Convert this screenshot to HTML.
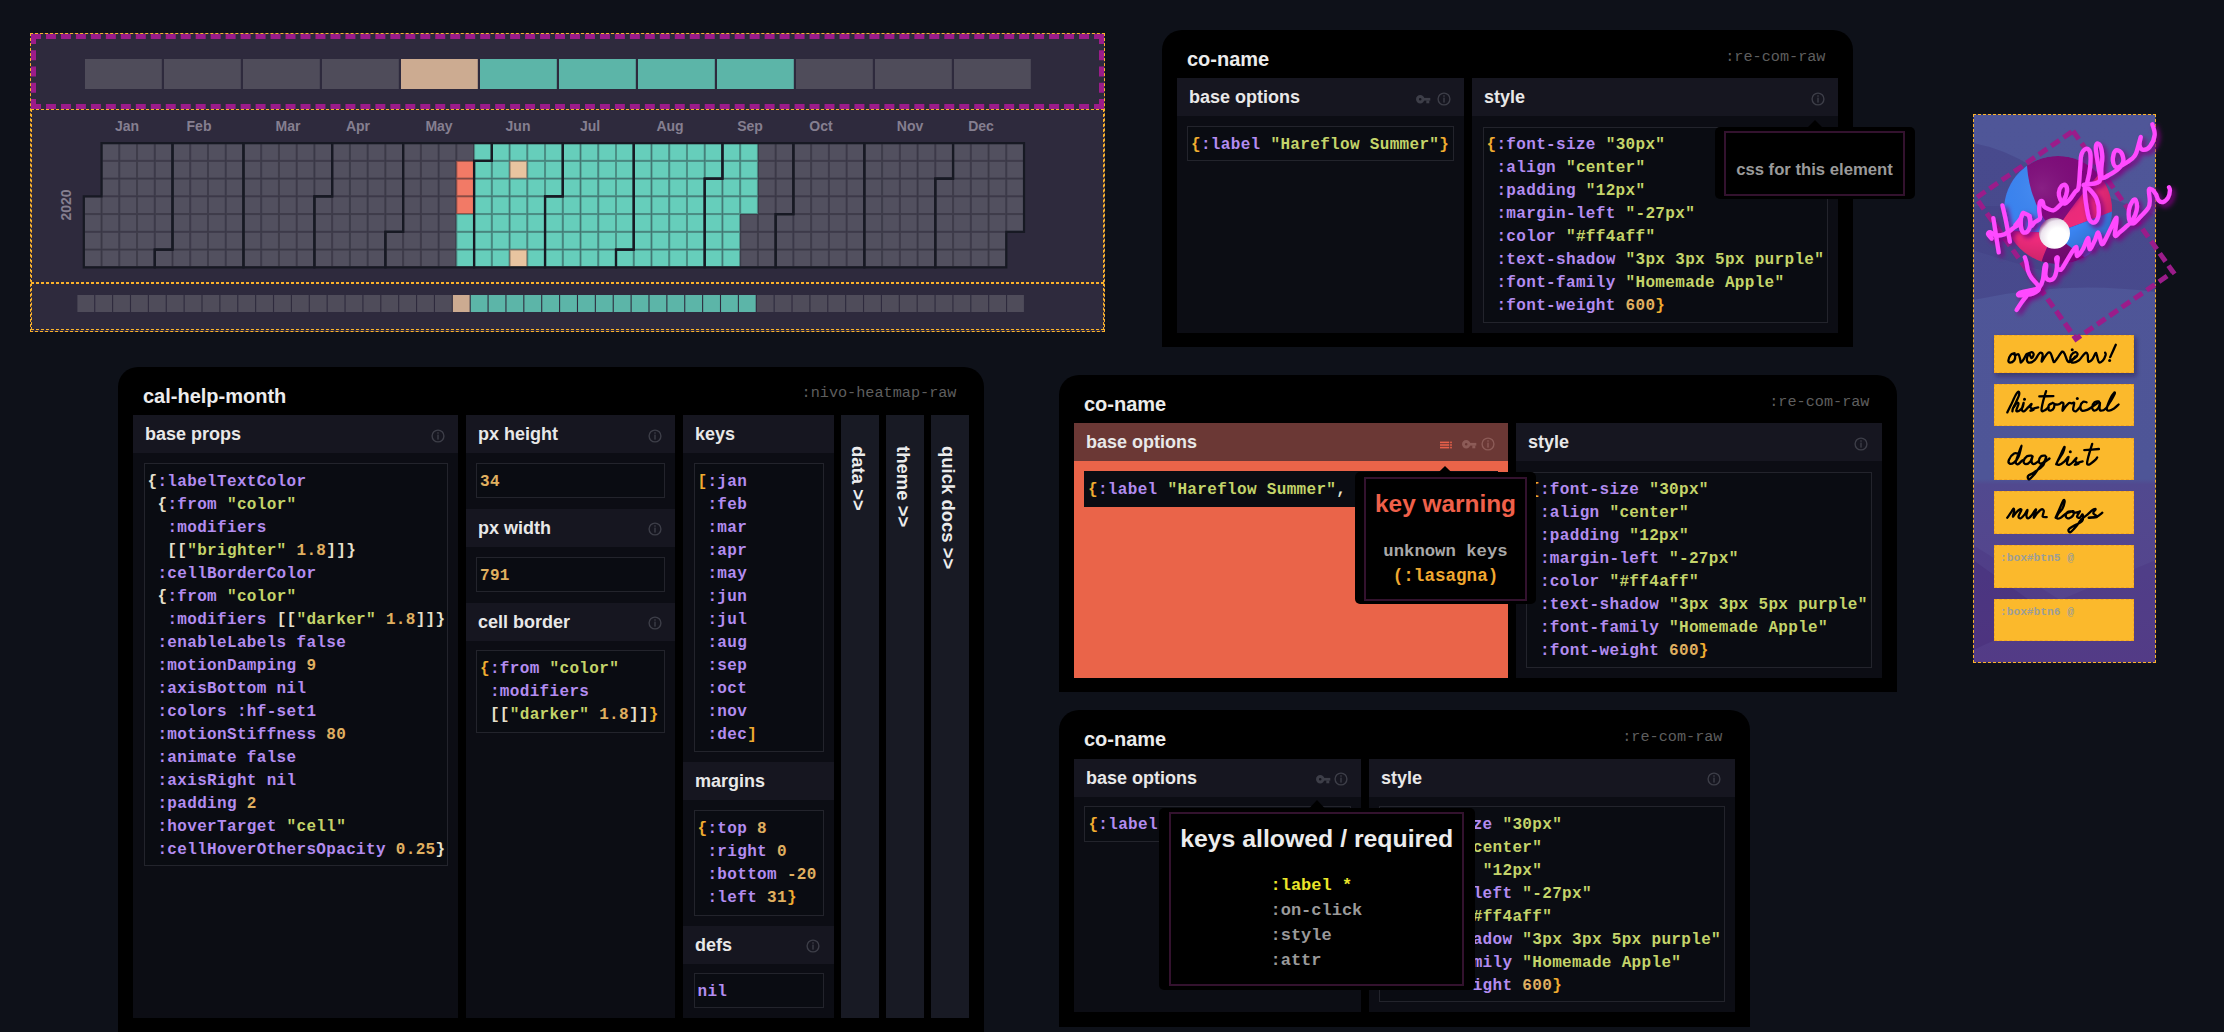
<!DOCTYPE html><html><head><meta charset="utf-8"><style>
*{box-sizing:border-box}
html,body{margin:0;padding:0}
body{width:2224px;height:1032px;background:#0e1119;position:relative;overflow:hidden;font-family:"Liberation Sans",sans-serif}
.abs{position:absolute}
.panel{position:absolute;background:#000;border-radius:20px 20px 0 0}
.title{position:absolute;color:#ececec;font-weight:bold;font-size:20px;line-height:24px;white-space:nowrap}
.raw{position:absolute;color:#5a5a5a;font-family:"Liberation Mono",monospace;font-size:14.5px;line-height:18px;white-space:nowrap;text-align:right}
.col{position:absolute;background:#0c0d14}
.hd{position:absolute;left:0;right:0;height:38px;background:#161620;color:#e8e8e8;font-weight:bold;font-size:18px;line-height:38px;padding-left:12px;white-space:nowrap}
.box{position:absolute;border:1px solid #23242c;background:#0a0c12;padding:6.5px 3px 3.5px;font-family:"Liberation Mono",monospace;font-weight:bold;font-size:16px;line-height:23px;letter-spacing:0.33px;white-space:pre;color:#e6e0cc;overflow:hidden}
.k{color:#b38cf0}.s{color:#c4d46a}.n{color:#e0b060}.o{color:#f0ac30}
.tab{position:absolute;top:415px;height:603px;width:38px;background:#181a24}
.tab span{position:absolute;left:7px;top:31px;writing-mode:vertical-rl;color:#ececec;font-weight:bold;font-size:18.5px;line-height:20px;white-space:nowrap}
.tip{position:absolute;background:#000;border-radius:5px}
.tip .in{position:absolute;border:1.5px solid #3a1436}
.tip .ar{position:absolute;width:0;height:0;border-left:7px solid transparent;border-right:7px solid transparent;border-bottom:7px solid #000}
</style></head><body>

<svg class="abs" style="left:0;top:0" width="1120" height="340" viewBox="0 0 1120 340">
<rect x="30" y="33" width="1075" height="299" fill="#2e2a3d"/>
<rect x="85.00" y="59" width="76.8" height="30" fill="#4f4c5a"/>
<rect x="164.00" y="59" width="76.8" height="30" fill="#4f4c5a"/>
<rect x="243.00" y="59" width="76.8" height="30" fill="#4f4c5a"/>
<rect x="322.00" y="59" width="76.8" height="30" fill="#4f4c5a"/>
<rect x="401.00" y="59" width="76.8" height="30" fill="#ccab91"/>
<rect x="480.00" y="59" width="76.8" height="30" fill="#5cb5a8"/>
<rect x="559.00" y="59" width="76.8" height="30" fill="#5cb5a8"/>
<rect x="638.00" y="59" width="76.8" height="30" fill="#5cb5a8"/>
<rect x="717.00" y="59" width="76.8" height="30" fill="#5cb5a8"/>
<rect x="796.00" y="59" width="76.8" height="30" fill="#4f4c5a"/>
<rect x="875.00" y="59" width="76.8" height="30" fill="#4f4c5a"/>
<rect x="954.00" y="59" width="76.8" height="30" fill="#4f4c5a"/>
<rect x="84.30" y="196.82" width="16.74" height="16.74" fill="#52505f" stroke="#3f3d4b" stroke-width="1"/>
<rect x="84.30" y="214.56" width="16.74" height="16.74" fill="#52505f" stroke="#3f3d4b" stroke-width="1"/>
<rect x="84.30" y="232.30" width="16.74" height="16.74" fill="#52505f" stroke="#3f3d4b" stroke-width="1"/>
<rect x="84.30" y="250.04" width="16.74" height="16.74" fill="#52505f" stroke="#3f3d4b" stroke-width="1"/>
<rect x="102.04" y="143.60" width="16.74" height="16.74" fill="#52505f" stroke="#3f3d4b" stroke-width="1"/>
<rect x="102.04" y="161.34" width="16.74" height="16.74" fill="#52505f" stroke="#3f3d4b" stroke-width="1"/>
<rect x="102.04" y="179.08" width="16.74" height="16.74" fill="#52505f" stroke="#3f3d4b" stroke-width="1"/>
<rect x="102.04" y="196.82" width="16.74" height="16.74" fill="#52505f" stroke="#3f3d4b" stroke-width="1"/>
<rect x="102.04" y="214.56" width="16.74" height="16.74" fill="#52505f" stroke="#3f3d4b" stroke-width="1"/>
<rect x="102.04" y="232.30" width="16.74" height="16.74" fill="#52505f" stroke="#3f3d4b" stroke-width="1"/>
<rect x="102.04" y="250.04" width="16.74" height="16.74" fill="#52505f" stroke="#3f3d4b" stroke-width="1"/>
<rect x="119.78" y="143.60" width="16.74" height="16.74" fill="#52505f" stroke="#3f3d4b" stroke-width="1"/>
<rect x="119.78" y="161.34" width="16.74" height="16.74" fill="#52505f" stroke="#3f3d4b" stroke-width="1"/>
<rect x="119.78" y="179.08" width="16.74" height="16.74" fill="#52505f" stroke="#3f3d4b" stroke-width="1"/>
<rect x="119.78" y="196.82" width="16.74" height="16.74" fill="#52505f" stroke="#3f3d4b" stroke-width="1"/>
<rect x="119.78" y="214.56" width="16.74" height="16.74" fill="#52505f" stroke="#3f3d4b" stroke-width="1"/>
<rect x="119.78" y="232.30" width="16.74" height="16.74" fill="#52505f" stroke="#3f3d4b" stroke-width="1"/>
<rect x="119.78" y="250.04" width="16.74" height="16.74" fill="#52505f" stroke="#3f3d4b" stroke-width="1"/>
<rect x="137.52" y="143.60" width="16.74" height="16.74" fill="#52505f" stroke="#3f3d4b" stroke-width="1"/>
<rect x="137.52" y="161.34" width="16.74" height="16.74" fill="#52505f" stroke="#3f3d4b" stroke-width="1"/>
<rect x="137.52" y="179.08" width="16.74" height="16.74" fill="#52505f" stroke="#3f3d4b" stroke-width="1"/>
<rect x="137.52" y="196.82" width="16.74" height="16.74" fill="#52505f" stroke="#3f3d4b" stroke-width="1"/>
<rect x="137.52" y="214.56" width="16.74" height="16.74" fill="#52505f" stroke="#3f3d4b" stroke-width="1"/>
<rect x="137.52" y="232.30" width="16.74" height="16.74" fill="#52505f" stroke="#3f3d4b" stroke-width="1"/>
<rect x="137.52" y="250.04" width="16.74" height="16.74" fill="#52505f" stroke="#3f3d4b" stroke-width="1"/>
<rect x="155.26" y="143.60" width="16.74" height="16.74" fill="#52505f" stroke="#3f3d4b" stroke-width="1"/>
<rect x="155.26" y="161.34" width="16.74" height="16.74" fill="#52505f" stroke="#3f3d4b" stroke-width="1"/>
<rect x="155.26" y="179.08" width="16.74" height="16.74" fill="#52505f" stroke="#3f3d4b" stroke-width="1"/>
<rect x="155.26" y="196.82" width="16.74" height="16.74" fill="#52505f" stroke="#3f3d4b" stroke-width="1"/>
<rect x="155.26" y="214.56" width="16.74" height="16.74" fill="#52505f" stroke="#3f3d4b" stroke-width="1"/>
<rect x="155.26" y="232.30" width="16.74" height="16.74" fill="#52505f" stroke="#3f3d4b" stroke-width="1"/>
<rect x="155.26" y="250.04" width="16.74" height="16.74" fill="#52505f" stroke="#3f3d4b" stroke-width="1"/>
<rect x="173.00" y="143.60" width="16.74" height="16.74" fill="#52505f" stroke="#3f3d4b" stroke-width="1"/>
<rect x="173.00" y="161.34" width="16.74" height="16.74" fill="#52505f" stroke="#3f3d4b" stroke-width="1"/>
<rect x="173.00" y="179.08" width="16.74" height="16.74" fill="#52505f" stroke="#3f3d4b" stroke-width="1"/>
<rect x="173.00" y="196.82" width="16.74" height="16.74" fill="#52505f" stroke="#3f3d4b" stroke-width="1"/>
<rect x="173.00" y="214.56" width="16.74" height="16.74" fill="#52505f" stroke="#3f3d4b" stroke-width="1"/>
<rect x="173.00" y="232.30" width="16.74" height="16.74" fill="#52505f" stroke="#3f3d4b" stroke-width="1"/>
<rect x="173.00" y="250.04" width="16.74" height="16.74" fill="#52505f" stroke="#3f3d4b" stroke-width="1"/>
<rect x="190.74" y="143.60" width="16.74" height="16.74" fill="#52505f" stroke="#3f3d4b" stroke-width="1"/>
<rect x="190.74" y="161.34" width="16.74" height="16.74" fill="#52505f" stroke="#3f3d4b" stroke-width="1"/>
<rect x="190.74" y="179.08" width="16.74" height="16.74" fill="#52505f" stroke="#3f3d4b" stroke-width="1"/>
<rect x="190.74" y="196.82" width="16.74" height="16.74" fill="#52505f" stroke="#3f3d4b" stroke-width="1"/>
<rect x="190.74" y="214.56" width="16.74" height="16.74" fill="#52505f" stroke="#3f3d4b" stroke-width="1"/>
<rect x="190.74" y="232.30" width="16.74" height="16.74" fill="#52505f" stroke="#3f3d4b" stroke-width="1"/>
<rect x="190.74" y="250.04" width="16.74" height="16.74" fill="#52505f" stroke="#3f3d4b" stroke-width="1"/>
<rect x="208.48" y="143.60" width="16.74" height="16.74" fill="#52505f" stroke="#3f3d4b" stroke-width="1"/>
<rect x="208.48" y="161.34" width="16.74" height="16.74" fill="#52505f" stroke="#3f3d4b" stroke-width="1"/>
<rect x="208.48" y="179.08" width="16.74" height="16.74" fill="#52505f" stroke="#3f3d4b" stroke-width="1"/>
<rect x="208.48" y="196.82" width="16.74" height="16.74" fill="#52505f" stroke="#3f3d4b" stroke-width="1"/>
<rect x="208.48" y="214.56" width="16.74" height="16.74" fill="#52505f" stroke="#3f3d4b" stroke-width="1"/>
<rect x="208.48" y="232.30" width="16.74" height="16.74" fill="#52505f" stroke="#3f3d4b" stroke-width="1"/>
<rect x="208.48" y="250.04" width="16.74" height="16.74" fill="#52505f" stroke="#3f3d4b" stroke-width="1"/>
<rect x="226.22" y="143.60" width="16.74" height="16.74" fill="#52505f" stroke="#3f3d4b" stroke-width="1"/>
<rect x="226.22" y="161.34" width="16.74" height="16.74" fill="#52505f" stroke="#3f3d4b" stroke-width="1"/>
<rect x="226.22" y="179.08" width="16.74" height="16.74" fill="#52505f" stroke="#3f3d4b" stroke-width="1"/>
<rect x="226.22" y="196.82" width="16.74" height="16.74" fill="#52505f" stroke="#3f3d4b" stroke-width="1"/>
<rect x="226.22" y="214.56" width="16.74" height="16.74" fill="#52505f" stroke="#3f3d4b" stroke-width="1"/>
<rect x="226.22" y="232.30" width="16.74" height="16.74" fill="#52505f" stroke="#3f3d4b" stroke-width="1"/>
<rect x="226.22" y="250.04" width="16.74" height="16.74" fill="#52505f" stroke="#3f3d4b" stroke-width="1"/>
<rect x="243.96" y="143.60" width="16.74" height="16.74" fill="#52505f" stroke="#3f3d4b" stroke-width="1"/>
<rect x="243.96" y="161.34" width="16.74" height="16.74" fill="#52505f" stroke="#3f3d4b" stroke-width="1"/>
<rect x="243.96" y="179.08" width="16.74" height="16.74" fill="#52505f" stroke="#3f3d4b" stroke-width="1"/>
<rect x="243.96" y="196.82" width="16.74" height="16.74" fill="#52505f" stroke="#3f3d4b" stroke-width="1"/>
<rect x="243.96" y="214.56" width="16.74" height="16.74" fill="#52505f" stroke="#3f3d4b" stroke-width="1"/>
<rect x="243.96" y="232.30" width="16.74" height="16.74" fill="#52505f" stroke="#3f3d4b" stroke-width="1"/>
<rect x="243.96" y="250.04" width="16.74" height="16.74" fill="#52505f" stroke="#3f3d4b" stroke-width="1"/>
<rect x="261.70" y="143.60" width="16.74" height="16.74" fill="#52505f" stroke="#3f3d4b" stroke-width="1"/>
<rect x="261.70" y="161.34" width="16.74" height="16.74" fill="#52505f" stroke="#3f3d4b" stroke-width="1"/>
<rect x="261.70" y="179.08" width="16.74" height="16.74" fill="#52505f" stroke="#3f3d4b" stroke-width="1"/>
<rect x="261.70" y="196.82" width="16.74" height="16.74" fill="#52505f" stroke="#3f3d4b" stroke-width="1"/>
<rect x="261.70" y="214.56" width="16.74" height="16.74" fill="#52505f" stroke="#3f3d4b" stroke-width="1"/>
<rect x="261.70" y="232.30" width="16.74" height="16.74" fill="#52505f" stroke="#3f3d4b" stroke-width="1"/>
<rect x="261.70" y="250.04" width="16.74" height="16.74" fill="#52505f" stroke="#3f3d4b" stroke-width="1"/>
<rect x="279.44" y="143.60" width="16.74" height="16.74" fill="#52505f" stroke="#3f3d4b" stroke-width="1"/>
<rect x="279.44" y="161.34" width="16.74" height="16.74" fill="#52505f" stroke="#3f3d4b" stroke-width="1"/>
<rect x="279.44" y="179.08" width="16.74" height="16.74" fill="#52505f" stroke="#3f3d4b" stroke-width="1"/>
<rect x="279.44" y="196.82" width="16.74" height="16.74" fill="#52505f" stroke="#3f3d4b" stroke-width="1"/>
<rect x="279.44" y="214.56" width="16.74" height="16.74" fill="#52505f" stroke="#3f3d4b" stroke-width="1"/>
<rect x="279.44" y="232.30" width="16.74" height="16.74" fill="#52505f" stroke="#3f3d4b" stroke-width="1"/>
<rect x="279.44" y="250.04" width="16.74" height="16.74" fill="#52505f" stroke="#3f3d4b" stroke-width="1"/>
<rect x="297.18" y="143.60" width="16.74" height="16.74" fill="#52505f" stroke="#3f3d4b" stroke-width="1"/>
<rect x="297.18" y="161.34" width="16.74" height="16.74" fill="#52505f" stroke="#3f3d4b" stroke-width="1"/>
<rect x="297.18" y="179.08" width="16.74" height="16.74" fill="#52505f" stroke="#3f3d4b" stroke-width="1"/>
<rect x="297.18" y="196.82" width="16.74" height="16.74" fill="#52505f" stroke="#3f3d4b" stroke-width="1"/>
<rect x="297.18" y="214.56" width="16.74" height="16.74" fill="#52505f" stroke="#3f3d4b" stroke-width="1"/>
<rect x="297.18" y="232.30" width="16.74" height="16.74" fill="#52505f" stroke="#3f3d4b" stroke-width="1"/>
<rect x="297.18" y="250.04" width="16.74" height="16.74" fill="#52505f" stroke="#3f3d4b" stroke-width="1"/>
<rect x="314.92" y="143.60" width="16.74" height="16.74" fill="#52505f" stroke="#3f3d4b" stroke-width="1"/>
<rect x="314.92" y="161.34" width="16.74" height="16.74" fill="#52505f" stroke="#3f3d4b" stroke-width="1"/>
<rect x="314.92" y="179.08" width="16.74" height="16.74" fill="#52505f" stroke="#3f3d4b" stroke-width="1"/>
<rect x="314.92" y="196.82" width="16.74" height="16.74" fill="#52505f" stroke="#3f3d4b" stroke-width="1"/>
<rect x="314.92" y="214.56" width="16.74" height="16.74" fill="#52505f" stroke="#3f3d4b" stroke-width="1"/>
<rect x="314.92" y="232.30" width="16.74" height="16.74" fill="#52505f" stroke="#3f3d4b" stroke-width="1"/>
<rect x="314.92" y="250.04" width="16.74" height="16.74" fill="#52505f" stroke="#3f3d4b" stroke-width="1"/>
<rect x="332.66" y="143.60" width="16.74" height="16.74" fill="#52505f" stroke="#3f3d4b" stroke-width="1"/>
<rect x="332.66" y="161.34" width="16.74" height="16.74" fill="#52505f" stroke="#3f3d4b" stroke-width="1"/>
<rect x="332.66" y="179.08" width="16.74" height="16.74" fill="#52505f" stroke="#3f3d4b" stroke-width="1"/>
<rect x="332.66" y="196.82" width="16.74" height="16.74" fill="#52505f" stroke="#3f3d4b" stroke-width="1"/>
<rect x="332.66" y="214.56" width="16.74" height="16.74" fill="#52505f" stroke="#3f3d4b" stroke-width="1"/>
<rect x="332.66" y="232.30" width="16.74" height="16.74" fill="#52505f" stroke="#3f3d4b" stroke-width="1"/>
<rect x="332.66" y="250.04" width="16.74" height="16.74" fill="#52505f" stroke="#3f3d4b" stroke-width="1"/>
<rect x="350.40" y="143.60" width="16.74" height="16.74" fill="#52505f" stroke="#3f3d4b" stroke-width="1"/>
<rect x="350.40" y="161.34" width="16.74" height="16.74" fill="#52505f" stroke="#3f3d4b" stroke-width="1"/>
<rect x="350.40" y="179.08" width="16.74" height="16.74" fill="#52505f" stroke="#3f3d4b" stroke-width="1"/>
<rect x="350.40" y="196.82" width="16.74" height="16.74" fill="#52505f" stroke="#3f3d4b" stroke-width="1"/>
<rect x="350.40" y="214.56" width="16.74" height="16.74" fill="#52505f" stroke="#3f3d4b" stroke-width="1"/>
<rect x="350.40" y="232.30" width="16.74" height="16.74" fill="#52505f" stroke="#3f3d4b" stroke-width="1"/>
<rect x="350.40" y="250.04" width="16.74" height="16.74" fill="#52505f" stroke="#3f3d4b" stroke-width="1"/>
<rect x="368.14" y="143.60" width="16.74" height="16.74" fill="#52505f" stroke="#3f3d4b" stroke-width="1"/>
<rect x="368.14" y="161.34" width="16.74" height="16.74" fill="#52505f" stroke="#3f3d4b" stroke-width="1"/>
<rect x="368.14" y="179.08" width="16.74" height="16.74" fill="#52505f" stroke="#3f3d4b" stroke-width="1"/>
<rect x="368.14" y="196.82" width="16.74" height="16.74" fill="#52505f" stroke="#3f3d4b" stroke-width="1"/>
<rect x="368.14" y="214.56" width="16.74" height="16.74" fill="#52505f" stroke="#3f3d4b" stroke-width="1"/>
<rect x="368.14" y="232.30" width="16.74" height="16.74" fill="#52505f" stroke="#3f3d4b" stroke-width="1"/>
<rect x="368.14" y="250.04" width="16.74" height="16.74" fill="#52505f" stroke="#3f3d4b" stroke-width="1"/>
<rect x="385.88" y="143.60" width="16.74" height="16.74" fill="#52505f" stroke="#3f3d4b" stroke-width="1"/>
<rect x="385.88" y="161.34" width="16.74" height="16.74" fill="#52505f" stroke="#3f3d4b" stroke-width="1"/>
<rect x="385.88" y="179.08" width="16.74" height="16.74" fill="#52505f" stroke="#3f3d4b" stroke-width="1"/>
<rect x="385.88" y="196.82" width="16.74" height="16.74" fill="#52505f" stroke="#3f3d4b" stroke-width="1"/>
<rect x="385.88" y="214.56" width="16.74" height="16.74" fill="#52505f" stroke="#3f3d4b" stroke-width="1"/>
<rect x="385.88" y="232.30" width="16.74" height="16.74" fill="#52505f" stroke="#3f3d4b" stroke-width="1"/>
<rect x="385.88" y="250.04" width="16.74" height="16.74" fill="#52505f" stroke="#3f3d4b" stroke-width="1"/>
<rect x="403.62" y="143.60" width="16.74" height="16.74" fill="#52505f" stroke="#3f3d4b" stroke-width="1"/>
<rect x="403.62" y="161.34" width="16.74" height="16.74" fill="#52505f" stroke="#3f3d4b" stroke-width="1"/>
<rect x="403.62" y="179.08" width="16.74" height="16.74" fill="#52505f" stroke="#3f3d4b" stroke-width="1"/>
<rect x="403.62" y="196.82" width="16.74" height="16.74" fill="#52505f" stroke="#3f3d4b" stroke-width="1"/>
<rect x="403.62" y="214.56" width="16.74" height="16.74" fill="#52505f" stroke="#3f3d4b" stroke-width="1"/>
<rect x="403.62" y="232.30" width="16.74" height="16.74" fill="#52505f" stroke="#3f3d4b" stroke-width="1"/>
<rect x="403.62" y="250.04" width="16.74" height="16.74" fill="#52505f" stroke="#3f3d4b" stroke-width="1"/>
<rect x="421.36" y="143.60" width="16.74" height="16.74" fill="#52505f" stroke="#3f3d4b" stroke-width="1"/>
<rect x="421.36" y="161.34" width="16.74" height="16.74" fill="#52505f" stroke="#3f3d4b" stroke-width="1"/>
<rect x="421.36" y="179.08" width="16.74" height="16.74" fill="#52505f" stroke="#3f3d4b" stroke-width="1"/>
<rect x="421.36" y="196.82" width="16.74" height="16.74" fill="#52505f" stroke="#3f3d4b" stroke-width="1"/>
<rect x="421.36" y="214.56" width="16.74" height="16.74" fill="#52505f" stroke="#3f3d4b" stroke-width="1"/>
<rect x="421.36" y="232.30" width="16.74" height="16.74" fill="#52505f" stroke="#3f3d4b" stroke-width="1"/>
<rect x="421.36" y="250.04" width="16.74" height="16.74" fill="#52505f" stroke="#3f3d4b" stroke-width="1"/>
<rect x="439.10" y="143.60" width="16.74" height="16.74" fill="#52505f" stroke="#3f3d4b" stroke-width="1"/>
<rect x="439.10" y="161.34" width="16.74" height="16.74" fill="#52505f" stroke="#3f3d4b" stroke-width="1"/>
<rect x="439.10" y="179.08" width="16.74" height="16.74" fill="#52505f" stroke="#3f3d4b" stroke-width="1"/>
<rect x="439.10" y="196.82" width="16.74" height="16.74" fill="#52505f" stroke="#3f3d4b" stroke-width="1"/>
<rect x="439.10" y="214.56" width="16.74" height="16.74" fill="#52505f" stroke="#3f3d4b" stroke-width="1"/>
<rect x="439.10" y="232.30" width="16.74" height="16.74" fill="#52505f" stroke="#3f3d4b" stroke-width="1"/>
<rect x="439.10" y="250.04" width="16.74" height="16.74" fill="#52505f" stroke="#3f3d4b" stroke-width="1"/>
<rect x="456.84" y="143.60" width="16.74" height="16.74" fill="#52505f" stroke="#3f3d4b" stroke-width="1"/>
<rect x="456.84" y="161.34" width="16.74" height="16.74" fill="#f27a66" stroke="#9a5247" stroke-width="1"/>
<rect x="456.84" y="179.08" width="16.74" height="16.74" fill="#f27a66" stroke="#9a5247" stroke-width="1"/>
<rect x="456.84" y="196.82" width="16.74" height="16.74" fill="#f27a66" stroke="#9a5247" stroke-width="1"/>
<rect x="456.84" y="214.56" width="16.74" height="16.74" fill="#66cebb" stroke="#4b8f85" stroke-width="1"/>
<rect x="456.84" y="232.30" width="16.74" height="16.74" fill="#66cebb" stroke="#4b8f85" stroke-width="1"/>
<rect x="456.84" y="250.04" width="16.74" height="16.74" fill="#66cebb" stroke="#4b8f85" stroke-width="1"/>
<rect x="474.58" y="143.60" width="16.74" height="16.74" fill="#66cebb" stroke="#4b8f85" stroke-width="1"/>
<rect x="474.58" y="161.34" width="16.74" height="16.74" fill="#66cebb" stroke="#4b8f85" stroke-width="1"/>
<rect x="474.58" y="179.08" width="16.74" height="16.74" fill="#66cebb" stroke="#4b8f85" stroke-width="1"/>
<rect x="474.58" y="196.82" width="16.74" height="16.74" fill="#66cebb" stroke="#4b8f85" stroke-width="1"/>
<rect x="474.58" y="214.56" width="16.74" height="16.74" fill="#66cebb" stroke="#4b8f85" stroke-width="1"/>
<rect x="474.58" y="232.30" width="16.74" height="16.74" fill="#66cebb" stroke="#4b8f85" stroke-width="1"/>
<rect x="474.58" y="250.04" width="16.74" height="16.74" fill="#66cebb" stroke="#4b8f85" stroke-width="1"/>
<rect x="492.32" y="143.60" width="16.74" height="16.74" fill="#66cebb" stroke="#4b8f85" stroke-width="1"/>
<rect x="492.32" y="161.34" width="16.74" height="16.74" fill="#66cebb" stroke="#4b8f85" stroke-width="1"/>
<rect x="492.32" y="179.08" width="16.74" height="16.74" fill="#66cebb" stroke="#4b8f85" stroke-width="1"/>
<rect x="492.32" y="196.82" width="16.74" height="16.74" fill="#66cebb" stroke="#4b8f85" stroke-width="1"/>
<rect x="492.32" y="214.56" width="16.74" height="16.74" fill="#66cebb" stroke="#4b8f85" stroke-width="1"/>
<rect x="492.32" y="232.30" width="16.74" height="16.74" fill="#66cebb" stroke="#4b8f85" stroke-width="1"/>
<rect x="492.32" y="250.04" width="16.74" height="16.74" fill="#66cebb" stroke="#4b8f85" stroke-width="1"/>
<rect x="510.06" y="143.60" width="16.74" height="16.74" fill="#66cebb" stroke="#4b8f85" stroke-width="1"/>
<rect x="510.06" y="161.34" width="16.74" height="16.74" fill="#e8c4a0" stroke="#9c8670" stroke-width="1"/>
<rect x="510.06" y="179.08" width="16.74" height="16.74" fill="#66cebb" stroke="#4b8f85" stroke-width="1"/>
<rect x="510.06" y="196.82" width="16.74" height="16.74" fill="#66cebb" stroke="#4b8f85" stroke-width="1"/>
<rect x="510.06" y="214.56" width="16.74" height="16.74" fill="#66cebb" stroke="#4b8f85" stroke-width="1"/>
<rect x="510.06" y="232.30" width="16.74" height="16.74" fill="#66cebb" stroke="#4b8f85" stroke-width="1"/>
<rect x="510.06" y="250.04" width="16.74" height="16.74" fill="#e8c4a0" stroke="#9c8670" stroke-width="1"/>
<rect x="527.80" y="143.60" width="16.74" height="16.74" fill="#66cebb" stroke="#4b8f85" stroke-width="1"/>
<rect x="527.80" y="161.34" width="16.74" height="16.74" fill="#66cebb" stroke="#4b8f85" stroke-width="1"/>
<rect x="527.80" y="179.08" width="16.74" height="16.74" fill="#66cebb" stroke="#4b8f85" stroke-width="1"/>
<rect x="527.80" y="196.82" width="16.74" height="16.74" fill="#66cebb" stroke="#4b8f85" stroke-width="1"/>
<rect x="527.80" y="214.56" width="16.74" height="16.74" fill="#66cebb" stroke="#4b8f85" stroke-width="1"/>
<rect x="527.80" y="232.30" width="16.74" height="16.74" fill="#66cebb" stroke="#4b8f85" stroke-width="1"/>
<rect x="527.80" y="250.04" width="16.74" height="16.74" fill="#66cebb" stroke="#4b8f85" stroke-width="1"/>
<rect x="545.54" y="143.60" width="16.74" height="16.74" fill="#66cebb" stroke="#4b8f85" stroke-width="1"/>
<rect x="545.54" y="161.34" width="16.74" height="16.74" fill="#66cebb" stroke="#4b8f85" stroke-width="1"/>
<rect x="545.54" y="179.08" width="16.74" height="16.74" fill="#66cebb" stroke="#4b8f85" stroke-width="1"/>
<rect x="545.54" y="196.82" width="16.74" height="16.74" fill="#66cebb" stroke="#4b8f85" stroke-width="1"/>
<rect x="545.54" y="214.56" width="16.74" height="16.74" fill="#66cebb" stroke="#4b8f85" stroke-width="1"/>
<rect x="545.54" y="232.30" width="16.74" height="16.74" fill="#66cebb" stroke="#4b8f85" stroke-width="1"/>
<rect x="545.54" y="250.04" width="16.74" height="16.74" fill="#66cebb" stroke="#4b8f85" stroke-width="1"/>
<rect x="563.28" y="143.60" width="16.74" height="16.74" fill="#66cebb" stroke="#4b8f85" stroke-width="1"/>
<rect x="563.28" y="161.34" width="16.74" height="16.74" fill="#66cebb" stroke="#4b8f85" stroke-width="1"/>
<rect x="563.28" y="179.08" width="16.74" height="16.74" fill="#66cebb" stroke="#4b8f85" stroke-width="1"/>
<rect x="563.28" y="196.82" width="16.74" height="16.74" fill="#66cebb" stroke="#4b8f85" stroke-width="1"/>
<rect x="563.28" y="214.56" width="16.74" height="16.74" fill="#66cebb" stroke="#4b8f85" stroke-width="1"/>
<rect x="563.28" y="232.30" width="16.74" height="16.74" fill="#66cebb" stroke="#4b8f85" stroke-width="1"/>
<rect x="563.28" y="250.04" width="16.74" height="16.74" fill="#66cebb" stroke="#4b8f85" stroke-width="1"/>
<rect x="581.02" y="143.60" width="16.74" height="16.74" fill="#66cebb" stroke="#4b8f85" stroke-width="1"/>
<rect x="581.02" y="161.34" width="16.74" height="16.74" fill="#66cebb" stroke="#4b8f85" stroke-width="1"/>
<rect x="581.02" y="179.08" width="16.74" height="16.74" fill="#66cebb" stroke="#4b8f85" stroke-width="1"/>
<rect x="581.02" y="196.82" width="16.74" height="16.74" fill="#66cebb" stroke="#4b8f85" stroke-width="1"/>
<rect x="581.02" y="214.56" width="16.74" height="16.74" fill="#66cebb" stroke="#4b8f85" stroke-width="1"/>
<rect x="581.02" y="232.30" width="16.74" height="16.74" fill="#66cebb" stroke="#4b8f85" stroke-width="1"/>
<rect x="581.02" y="250.04" width="16.74" height="16.74" fill="#66cebb" stroke="#4b8f85" stroke-width="1"/>
<rect x="598.76" y="143.60" width="16.74" height="16.74" fill="#66cebb" stroke="#4b8f85" stroke-width="1"/>
<rect x="598.76" y="161.34" width="16.74" height="16.74" fill="#66cebb" stroke="#4b8f85" stroke-width="1"/>
<rect x="598.76" y="179.08" width="16.74" height="16.74" fill="#66cebb" stroke="#4b8f85" stroke-width="1"/>
<rect x="598.76" y="196.82" width="16.74" height="16.74" fill="#66cebb" stroke="#4b8f85" stroke-width="1"/>
<rect x="598.76" y="214.56" width="16.74" height="16.74" fill="#66cebb" stroke="#4b8f85" stroke-width="1"/>
<rect x="598.76" y="232.30" width="16.74" height="16.74" fill="#66cebb" stroke="#4b8f85" stroke-width="1"/>
<rect x="598.76" y="250.04" width="16.74" height="16.74" fill="#66cebb" stroke="#4b8f85" stroke-width="1"/>
<rect x="616.50" y="143.60" width="16.74" height="16.74" fill="#66cebb" stroke="#4b8f85" stroke-width="1"/>
<rect x="616.50" y="161.34" width="16.74" height="16.74" fill="#66cebb" stroke="#4b8f85" stroke-width="1"/>
<rect x="616.50" y="179.08" width="16.74" height="16.74" fill="#66cebb" stroke="#4b8f85" stroke-width="1"/>
<rect x="616.50" y="196.82" width="16.74" height="16.74" fill="#66cebb" stroke="#4b8f85" stroke-width="1"/>
<rect x="616.50" y="214.56" width="16.74" height="16.74" fill="#66cebb" stroke="#4b8f85" stroke-width="1"/>
<rect x="616.50" y="232.30" width="16.74" height="16.74" fill="#66cebb" stroke="#4b8f85" stroke-width="1"/>
<rect x="616.50" y="250.04" width="16.74" height="16.74" fill="#66cebb" stroke="#4b8f85" stroke-width="1"/>
<rect x="634.24" y="143.60" width="16.74" height="16.74" fill="#66cebb" stroke="#4b8f85" stroke-width="1"/>
<rect x="634.24" y="161.34" width="16.74" height="16.74" fill="#66cebb" stroke="#4b8f85" stroke-width="1"/>
<rect x="634.24" y="179.08" width="16.74" height="16.74" fill="#66cebb" stroke="#4b8f85" stroke-width="1"/>
<rect x="634.24" y="196.82" width="16.74" height="16.74" fill="#66cebb" stroke="#4b8f85" stroke-width="1"/>
<rect x="634.24" y="214.56" width="16.74" height="16.74" fill="#66cebb" stroke="#4b8f85" stroke-width="1"/>
<rect x="634.24" y="232.30" width="16.74" height="16.74" fill="#66cebb" stroke="#4b8f85" stroke-width="1"/>
<rect x="634.24" y="250.04" width="16.74" height="16.74" fill="#66cebb" stroke="#4b8f85" stroke-width="1"/>
<rect x="651.98" y="143.60" width="16.74" height="16.74" fill="#66cebb" stroke="#4b8f85" stroke-width="1"/>
<rect x="651.98" y="161.34" width="16.74" height="16.74" fill="#66cebb" stroke="#4b8f85" stroke-width="1"/>
<rect x="651.98" y="179.08" width="16.74" height="16.74" fill="#66cebb" stroke="#4b8f85" stroke-width="1"/>
<rect x="651.98" y="196.82" width="16.74" height="16.74" fill="#66cebb" stroke="#4b8f85" stroke-width="1"/>
<rect x="651.98" y="214.56" width="16.74" height="16.74" fill="#66cebb" stroke="#4b8f85" stroke-width="1"/>
<rect x="651.98" y="232.30" width="16.74" height="16.74" fill="#66cebb" stroke="#4b8f85" stroke-width="1"/>
<rect x="651.98" y="250.04" width="16.74" height="16.74" fill="#66cebb" stroke="#4b8f85" stroke-width="1"/>
<rect x="669.72" y="143.60" width="16.74" height="16.74" fill="#66cebb" stroke="#4b8f85" stroke-width="1"/>
<rect x="669.72" y="161.34" width="16.74" height="16.74" fill="#66cebb" stroke="#4b8f85" stroke-width="1"/>
<rect x="669.72" y="179.08" width="16.74" height="16.74" fill="#66cebb" stroke="#4b8f85" stroke-width="1"/>
<rect x="669.72" y="196.82" width="16.74" height="16.74" fill="#66cebb" stroke="#4b8f85" stroke-width="1"/>
<rect x="669.72" y="214.56" width="16.74" height="16.74" fill="#66cebb" stroke="#4b8f85" stroke-width="1"/>
<rect x="669.72" y="232.30" width="16.74" height="16.74" fill="#66cebb" stroke="#4b8f85" stroke-width="1"/>
<rect x="669.72" y="250.04" width="16.74" height="16.74" fill="#66cebb" stroke="#4b8f85" stroke-width="1"/>
<rect x="687.46" y="143.60" width="16.74" height="16.74" fill="#66cebb" stroke="#4b8f85" stroke-width="1"/>
<rect x="687.46" y="161.34" width="16.74" height="16.74" fill="#66cebb" stroke="#4b8f85" stroke-width="1"/>
<rect x="687.46" y="179.08" width="16.74" height="16.74" fill="#66cebb" stroke="#4b8f85" stroke-width="1"/>
<rect x="687.46" y="196.82" width="16.74" height="16.74" fill="#66cebb" stroke="#4b8f85" stroke-width="1"/>
<rect x="687.46" y="214.56" width="16.74" height="16.74" fill="#66cebb" stroke="#4b8f85" stroke-width="1"/>
<rect x="687.46" y="232.30" width="16.74" height="16.74" fill="#66cebb" stroke="#4b8f85" stroke-width="1"/>
<rect x="687.46" y="250.04" width="16.74" height="16.74" fill="#66cebb" stroke="#4b8f85" stroke-width="1"/>
<rect x="705.20" y="143.60" width="16.74" height="16.74" fill="#66cebb" stroke="#4b8f85" stroke-width="1"/>
<rect x="705.20" y="161.34" width="16.74" height="16.74" fill="#66cebb" stroke="#4b8f85" stroke-width="1"/>
<rect x="705.20" y="179.08" width="16.74" height="16.74" fill="#66cebb" stroke="#4b8f85" stroke-width="1"/>
<rect x="705.20" y="196.82" width="16.74" height="16.74" fill="#66cebb" stroke="#4b8f85" stroke-width="1"/>
<rect x="705.20" y="214.56" width="16.74" height="16.74" fill="#66cebb" stroke="#4b8f85" stroke-width="1"/>
<rect x="705.20" y="232.30" width="16.74" height="16.74" fill="#66cebb" stroke="#4b8f85" stroke-width="1"/>
<rect x="705.20" y="250.04" width="16.74" height="16.74" fill="#66cebb" stroke="#4b8f85" stroke-width="1"/>
<rect x="722.94" y="143.60" width="16.74" height="16.74" fill="#66cebb" stroke="#4b8f85" stroke-width="1"/>
<rect x="722.94" y="161.34" width="16.74" height="16.74" fill="#66cebb" stroke="#4b8f85" stroke-width="1"/>
<rect x="722.94" y="179.08" width="16.74" height="16.74" fill="#66cebb" stroke="#4b8f85" stroke-width="1"/>
<rect x="722.94" y="196.82" width="16.74" height="16.74" fill="#66cebb" stroke="#4b8f85" stroke-width="1"/>
<rect x="722.94" y="214.56" width="16.74" height="16.74" fill="#66cebb" stroke="#4b8f85" stroke-width="1"/>
<rect x="722.94" y="232.30" width="16.74" height="16.74" fill="#66cebb" stroke="#4b8f85" stroke-width="1"/>
<rect x="722.94" y="250.04" width="16.74" height="16.74" fill="#66cebb" stroke="#4b8f85" stroke-width="1"/>
<rect x="740.68" y="143.60" width="16.74" height="16.74" fill="#66cebb" stroke="#4b8f85" stroke-width="1"/>
<rect x="740.68" y="161.34" width="16.74" height="16.74" fill="#66cebb" stroke="#4b8f85" stroke-width="1"/>
<rect x="740.68" y="179.08" width="16.74" height="16.74" fill="#66cebb" stroke="#4b8f85" stroke-width="1"/>
<rect x="740.68" y="196.82" width="16.74" height="16.74" fill="#66cebb" stroke="#4b8f85" stroke-width="1"/>
<rect x="740.68" y="214.56" width="16.74" height="16.74" fill="#52505f" stroke="#3f3d4b" stroke-width="1"/>
<rect x="740.68" y="232.30" width="16.74" height="16.74" fill="#52505f" stroke="#3f3d4b" stroke-width="1"/>
<rect x="740.68" y="250.04" width="16.74" height="16.74" fill="#52505f" stroke="#3f3d4b" stroke-width="1"/>
<rect x="758.42" y="143.60" width="16.74" height="16.74" fill="#52505f" stroke="#3f3d4b" stroke-width="1"/>
<rect x="758.42" y="161.34" width="16.74" height="16.74" fill="#52505f" stroke="#3f3d4b" stroke-width="1"/>
<rect x="758.42" y="179.08" width="16.74" height="16.74" fill="#52505f" stroke="#3f3d4b" stroke-width="1"/>
<rect x="758.42" y="196.82" width="16.74" height="16.74" fill="#52505f" stroke="#3f3d4b" stroke-width="1"/>
<rect x="758.42" y="214.56" width="16.74" height="16.74" fill="#52505f" stroke="#3f3d4b" stroke-width="1"/>
<rect x="758.42" y="232.30" width="16.74" height="16.74" fill="#52505f" stroke="#3f3d4b" stroke-width="1"/>
<rect x="758.42" y="250.04" width="16.74" height="16.74" fill="#52505f" stroke="#3f3d4b" stroke-width="1"/>
<rect x="776.16" y="143.60" width="16.74" height="16.74" fill="#52505f" stroke="#3f3d4b" stroke-width="1"/>
<rect x="776.16" y="161.34" width="16.74" height="16.74" fill="#52505f" stroke="#3f3d4b" stroke-width="1"/>
<rect x="776.16" y="179.08" width="16.74" height="16.74" fill="#52505f" stroke="#3f3d4b" stroke-width="1"/>
<rect x="776.16" y="196.82" width="16.74" height="16.74" fill="#52505f" stroke="#3f3d4b" stroke-width="1"/>
<rect x="776.16" y="214.56" width="16.74" height="16.74" fill="#52505f" stroke="#3f3d4b" stroke-width="1"/>
<rect x="776.16" y="232.30" width="16.74" height="16.74" fill="#52505f" stroke="#3f3d4b" stroke-width="1"/>
<rect x="776.16" y="250.04" width="16.74" height="16.74" fill="#52505f" stroke="#3f3d4b" stroke-width="1"/>
<rect x="793.90" y="143.60" width="16.74" height="16.74" fill="#52505f" stroke="#3f3d4b" stroke-width="1"/>
<rect x="793.90" y="161.34" width="16.74" height="16.74" fill="#52505f" stroke="#3f3d4b" stroke-width="1"/>
<rect x="793.90" y="179.08" width="16.74" height="16.74" fill="#52505f" stroke="#3f3d4b" stroke-width="1"/>
<rect x="793.90" y="196.82" width="16.74" height="16.74" fill="#52505f" stroke="#3f3d4b" stroke-width="1"/>
<rect x="793.90" y="214.56" width="16.74" height="16.74" fill="#52505f" stroke="#3f3d4b" stroke-width="1"/>
<rect x="793.90" y="232.30" width="16.74" height="16.74" fill="#52505f" stroke="#3f3d4b" stroke-width="1"/>
<rect x="793.90" y="250.04" width="16.74" height="16.74" fill="#52505f" stroke="#3f3d4b" stroke-width="1"/>
<rect x="811.64" y="143.60" width="16.74" height="16.74" fill="#52505f" stroke="#3f3d4b" stroke-width="1"/>
<rect x="811.64" y="161.34" width="16.74" height="16.74" fill="#52505f" stroke="#3f3d4b" stroke-width="1"/>
<rect x="811.64" y="179.08" width="16.74" height="16.74" fill="#52505f" stroke="#3f3d4b" stroke-width="1"/>
<rect x="811.64" y="196.82" width="16.74" height="16.74" fill="#52505f" stroke="#3f3d4b" stroke-width="1"/>
<rect x="811.64" y="214.56" width="16.74" height="16.74" fill="#52505f" stroke="#3f3d4b" stroke-width="1"/>
<rect x="811.64" y="232.30" width="16.74" height="16.74" fill="#52505f" stroke="#3f3d4b" stroke-width="1"/>
<rect x="811.64" y="250.04" width="16.74" height="16.74" fill="#52505f" stroke="#3f3d4b" stroke-width="1"/>
<rect x="829.38" y="143.60" width="16.74" height="16.74" fill="#52505f" stroke="#3f3d4b" stroke-width="1"/>
<rect x="829.38" y="161.34" width="16.74" height="16.74" fill="#52505f" stroke="#3f3d4b" stroke-width="1"/>
<rect x="829.38" y="179.08" width="16.74" height="16.74" fill="#52505f" stroke="#3f3d4b" stroke-width="1"/>
<rect x="829.38" y="196.82" width="16.74" height="16.74" fill="#52505f" stroke="#3f3d4b" stroke-width="1"/>
<rect x="829.38" y="214.56" width="16.74" height="16.74" fill="#52505f" stroke="#3f3d4b" stroke-width="1"/>
<rect x="829.38" y="232.30" width="16.74" height="16.74" fill="#52505f" stroke="#3f3d4b" stroke-width="1"/>
<rect x="829.38" y="250.04" width="16.74" height="16.74" fill="#52505f" stroke="#3f3d4b" stroke-width="1"/>
<rect x="847.12" y="143.60" width="16.74" height="16.74" fill="#52505f" stroke="#3f3d4b" stroke-width="1"/>
<rect x="847.12" y="161.34" width="16.74" height="16.74" fill="#52505f" stroke="#3f3d4b" stroke-width="1"/>
<rect x="847.12" y="179.08" width="16.74" height="16.74" fill="#52505f" stroke="#3f3d4b" stroke-width="1"/>
<rect x="847.12" y="196.82" width="16.74" height="16.74" fill="#52505f" stroke="#3f3d4b" stroke-width="1"/>
<rect x="847.12" y="214.56" width="16.74" height="16.74" fill="#52505f" stroke="#3f3d4b" stroke-width="1"/>
<rect x="847.12" y="232.30" width="16.74" height="16.74" fill="#52505f" stroke="#3f3d4b" stroke-width="1"/>
<rect x="847.12" y="250.04" width="16.74" height="16.74" fill="#52505f" stroke="#3f3d4b" stroke-width="1"/>
<rect x="864.86" y="143.60" width="16.74" height="16.74" fill="#52505f" stroke="#3f3d4b" stroke-width="1"/>
<rect x="864.86" y="161.34" width="16.74" height="16.74" fill="#52505f" stroke="#3f3d4b" stroke-width="1"/>
<rect x="864.86" y="179.08" width="16.74" height="16.74" fill="#52505f" stroke="#3f3d4b" stroke-width="1"/>
<rect x="864.86" y="196.82" width="16.74" height="16.74" fill="#52505f" stroke="#3f3d4b" stroke-width="1"/>
<rect x="864.86" y="214.56" width="16.74" height="16.74" fill="#52505f" stroke="#3f3d4b" stroke-width="1"/>
<rect x="864.86" y="232.30" width="16.74" height="16.74" fill="#52505f" stroke="#3f3d4b" stroke-width="1"/>
<rect x="864.86" y="250.04" width="16.74" height="16.74" fill="#52505f" stroke="#3f3d4b" stroke-width="1"/>
<rect x="882.60" y="143.60" width="16.74" height="16.74" fill="#52505f" stroke="#3f3d4b" stroke-width="1"/>
<rect x="882.60" y="161.34" width="16.74" height="16.74" fill="#52505f" stroke="#3f3d4b" stroke-width="1"/>
<rect x="882.60" y="179.08" width="16.74" height="16.74" fill="#52505f" stroke="#3f3d4b" stroke-width="1"/>
<rect x="882.60" y="196.82" width="16.74" height="16.74" fill="#52505f" stroke="#3f3d4b" stroke-width="1"/>
<rect x="882.60" y="214.56" width="16.74" height="16.74" fill="#52505f" stroke="#3f3d4b" stroke-width="1"/>
<rect x="882.60" y="232.30" width="16.74" height="16.74" fill="#52505f" stroke="#3f3d4b" stroke-width="1"/>
<rect x="882.60" y="250.04" width="16.74" height="16.74" fill="#52505f" stroke="#3f3d4b" stroke-width="1"/>
<rect x="900.34" y="143.60" width="16.74" height="16.74" fill="#52505f" stroke="#3f3d4b" stroke-width="1"/>
<rect x="900.34" y="161.34" width="16.74" height="16.74" fill="#52505f" stroke="#3f3d4b" stroke-width="1"/>
<rect x="900.34" y="179.08" width="16.74" height="16.74" fill="#52505f" stroke="#3f3d4b" stroke-width="1"/>
<rect x="900.34" y="196.82" width="16.74" height="16.74" fill="#52505f" stroke="#3f3d4b" stroke-width="1"/>
<rect x="900.34" y="214.56" width="16.74" height="16.74" fill="#52505f" stroke="#3f3d4b" stroke-width="1"/>
<rect x="900.34" y="232.30" width="16.74" height="16.74" fill="#52505f" stroke="#3f3d4b" stroke-width="1"/>
<rect x="900.34" y="250.04" width="16.74" height="16.74" fill="#52505f" stroke="#3f3d4b" stroke-width="1"/>
<rect x="918.08" y="143.60" width="16.74" height="16.74" fill="#52505f" stroke="#3f3d4b" stroke-width="1"/>
<rect x="918.08" y="161.34" width="16.74" height="16.74" fill="#52505f" stroke="#3f3d4b" stroke-width="1"/>
<rect x="918.08" y="179.08" width="16.74" height="16.74" fill="#52505f" stroke="#3f3d4b" stroke-width="1"/>
<rect x="918.08" y="196.82" width="16.74" height="16.74" fill="#52505f" stroke="#3f3d4b" stroke-width="1"/>
<rect x="918.08" y="214.56" width="16.74" height="16.74" fill="#52505f" stroke="#3f3d4b" stroke-width="1"/>
<rect x="918.08" y="232.30" width="16.74" height="16.74" fill="#52505f" stroke="#3f3d4b" stroke-width="1"/>
<rect x="918.08" y="250.04" width="16.74" height="16.74" fill="#52505f" stroke="#3f3d4b" stroke-width="1"/>
<rect x="935.82" y="143.60" width="16.74" height="16.74" fill="#52505f" stroke="#3f3d4b" stroke-width="1"/>
<rect x="935.82" y="161.34" width="16.74" height="16.74" fill="#52505f" stroke="#3f3d4b" stroke-width="1"/>
<rect x="935.82" y="179.08" width="16.74" height="16.74" fill="#52505f" stroke="#3f3d4b" stroke-width="1"/>
<rect x="935.82" y="196.82" width="16.74" height="16.74" fill="#52505f" stroke="#3f3d4b" stroke-width="1"/>
<rect x="935.82" y="214.56" width="16.74" height="16.74" fill="#52505f" stroke="#3f3d4b" stroke-width="1"/>
<rect x="935.82" y="232.30" width="16.74" height="16.74" fill="#52505f" stroke="#3f3d4b" stroke-width="1"/>
<rect x="935.82" y="250.04" width="16.74" height="16.74" fill="#52505f" stroke="#3f3d4b" stroke-width="1"/>
<rect x="953.56" y="143.60" width="16.74" height="16.74" fill="#52505f" stroke="#3f3d4b" stroke-width="1"/>
<rect x="953.56" y="161.34" width="16.74" height="16.74" fill="#52505f" stroke="#3f3d4b" stroke-width="1"/>
<rect x="953.56" y="179.08" width="16.74" height="16.74" fill="#52505f" stroke="#3f3d4b" stroke-width="1"/>
<rect x="953.56" y="196.82" width="16.74" height="16.74" fill="#52505f" stroke="#3f3d4b" stroke-width="1"/>
<rect x="953.56" y="214.56" width="16.74" height="16.74" fill="#52505f" stroke="#3f3d4b" stroke-width="1"/>
<rect x="953.56" y="232.30" width="16.74" height="16.74" fill="#52505f" stroke="#3f3d4b" stroke-width="1"/>
<rect x="953.56" y="250.04" width="16.74" height="16.74" fill="#52505f" stroke="#3f3d4b" stroke-width="1"/>
<rect x="971.30" y="143.60" width="16.74" height="16.74" fill="#52505f" stroke="#3f3d4b" stroke-width="1"/>
<rect x="971.30" y="161.34" width="16.74" height="16.74" fill="#52505f" stroke="#3f3d4b" stroke-width="1"/>
<rect x="971.30" y="179.08" width="16.74" height="16.74" fill="#52505f" stroke="#3f3d4b" stroke-width="1"/>
<rect x="971.30" y="196.82" width="16.74" height="16.74" fill="#52505f" stroke="#3f3d4b" stroke-width="1"/>
<rect x="971.30" y="214.56" width="16.74" height="16.74" fill="#52505f" stroke="#3f3d4b" stroke-width="1"/>
<rect x="971.30" y="232.30" width="16.74" height="16.74" fill="#52505f" stroke="#3f3d4b" stroke-width="1"/>
<rect x="971.30" y="250.04" width="16.74" height="16.74" fill="#52505f" stroke="#3f3d4b" stroke-width="1"/>
<rect x="989.04" y="143.60" width="16.74" height="16.74" fill="#52505f" stroke="#3f3d4b" stroke-width="1"/>
<rect x="989.04" y="161.34" width="16.74" height="16.74" fill="#52505f" stroke="#3f3d4b" stroke-width="1"/>
<rect x="989.04" y="179.08" width="16.74" height="16.74" fill="#52505f" stroke="#3f3d4b" stroke-width="1"/>
<rect x="989.04" y="196.82" width="16.74" height="16.74" fill="#52505f" stroke="#3f3d4b" stroke-width="1"/>
<rect x="989.04" y="214.56" width="16.74" height="16.74" fill="#52505f" stroke="#3f3d4b" stroke-width="1"/>
<rect x="989.04" y="232.30" width="16.74" height="16.74" fill="#52505f" stroke="#3f3d4b" stroke-width="1"/>
<rect x="989.04" y="250.04" width="16.74" height="16.74" fill="#52505f" stroke="#3f3d4b" stroke-width="1"/>
<rect x="1006.78" y="143.60" width="16.74" height="16.74" fill="#52505f" stroke="#3f3d4b" stroke-width="1"/>
<rect x="1006.78" y="161.34" width="16.74" height="16.74" fill="#52505f" stroke="#3f3d4b" stroke-width="1"/>
<rect x="1006.78" y="179.08" width="16.74" height="16.74" fill="#52505f" stroke="#3f3d4b" stroke-width="1"/>
<rect x="1006.78" y="196.82" width="16.74" height="16.74" fill="#52505f" stroke="#3f3d4b" stroke-width="1"/>
<rect x="1006.78" y="214.56" width="16.74" height="16.74" fill="#52505f" stroke="#3f3d4b" stroke-width="1"/>
<path d="M101.54,196.32H83.80V267.28H154.76V249.54H172.50V143.10H101.54Z" fill="none" stroke="#171923" stroke-width="2.2"/>
<path d="M172.50,249.54H154.76V267.28H225.72V267.28H243.46V143.10H172.50Z" fill="none" stroke="#171923" stroke-width="2.2"/>
<path d="M261.20,143.10H243.46V267.28H314.42V196.32H332.16V143.10H261.20Z" fill="none" stroke="#171923" stroke-width="2.2"/>
<path d="M332.16,196.32H314.42V267.28H385.38V231.80H403.12V143.10H332.16Z" fill="none" stroke="#171923" stroke-width="2.2"/>
<path d="M403.12,231.80H385.38V267.28H474.08V160.84H491.82V143.10H403.12Z" fill="none" stroke="#171923" stroke-width="2.2"/>
<path d="M491.82,160.84H474.08V267.28H545.04V196.32H562.78V143.10H491.82Z" fill="none" stroke="#171923" stroke-width="2.2"/>
<path d="M562.78,196.32H545.04V267.28H616.00V249.54H633.74V143.10H562.78Z" fill="none" stroke="#171923" stroke-width="2.2"/>
<path d="M633.74,249.54H616.00V267.28H704.70V178.58H722.44V143.10H633.74Z" fill="none" stroke="#171923" stroke-width="2.2"/>
<path d="M722.44,178.58H704.70V267.28H775.66V214.06H793.40V143.10H722.44Z" fill="none" stroke="#171923" stroke-width="2.2"/>
<path d="M793.40,214.06H775.66V267.28H846.62V267.28H864.36V143.10H793.40Z" fill="none" stroke="#171923" stroke-width="2.2"/>
<path d="M882.10,143.10H864.36V267.28H935.32V178.58H953.06V143.10H882.10Z" fill="none" stroke="#171923" stroke-width="2.2"/>
<path d="M953.06,178.58H935.32V267.28H1006.28V231.80H1024.02V143.10H953.06Z" fill="none" stroke="#171923" stroke-width="2.2"/>
<text x="127" y="131" text-anchor="middle" font-family="Liberation Sans" font-weight="bold" font-size="14" fill="#857f90">Jan</text>
<text x="199" y="131" text-anchor="middle" font-family="Liberation Sans" font-weight="bold" font-size="14" fill="#857f90">Feb</text>
<text x="288" y="131" text-anchor="middle" font-family="Liberation Sans" font-weight="bold" font-size="14" fill="#857f90">Mar</text>
<text x="358" y="131" text-anchor="middle" font-family="Liberation Sans" font-weight="bold" font-size="14" fill="#857f90">Apr</text>
<text x="439" y="131" text-anchor="middle" font-family="Liberation Sans" font-weight="bold" font-size="14" fill="#857f90">May</text>
<text x="518" y="131" text-anchor="middle" font-family="Liberation Sans" font-weight="bold" font-size="14" fill="#857f90">Jun</text>
<text x="590" y="131" text-anchor="middle" font-family="Liberation Sans" font-weight="bold" font-size="14" fill="#857f90">Jul</text>
<text x="670" y="131" text-anchor="middle" font-family="Liberation Sans" font-weight="bold" font-size="14" fill="#857f90">Aug</text>
<text x="750" y="131" text-anchor="middle" font-family="Liberation Sans" font-weight="bold" font-size="14" fill="#857f90">Sep</text>
<text x="821" y="131" text-anchor="middle" font-family="Liberation Sans" font-weight="bold" font-size="14" fill="#857f90">Oct</text>
<text x="910" y="131" text-anchor="middle" font-family="Liberation Sans" font-weight="bold" font-size="14" fill="#857f90">Nov</text>
<text x="981" y="131" text-anchor="middle" font-family="Liberation Sans" font-weight="bold" font-size="14" fill="#857f90">Dec</text>
<text transform="translate(71,205) rotate(-90)" text-anchor="middle" font-family="Liberation Sans" font-weight="bold" font-size="14" fill="#857f90">2020</text>
<rect x="77.40" y="295" width="16.78" height="17" fill="#4f4c5a"/>
<rect x="95.28" y="295" width="16.78" height="17" fill="#4f4c5a"/>
<rect x="113.16" y="295" width="16.78" height="17" fill="#4f4c5a"/>
<rect x="131.04" y="295" width="16.78" height="17" fill="#4f4c5a"/>
<rect x="148.92" y="295" width="16.78" height="17" fill="#4f4c5a"/>
<rect x="166.80" y="295" width="16.78" height="17" fill="#4f4c5a"/>
<rect x="184.68" y="295" width="16.78" height="17" fill="#4f4c5a"/>
<rect x="202.55" y="295" width="16.78" height="17" fill="#4f4c5a"/>
<rect x="220.43" y="295" width="16.78" height="17" fill="#4f4c5a"/>
<rect x="238.31" y="295" width="16.78" height="17" fill="#4f4c5a"/>
<rect x="256.19" y="295" width="16.78" height="17" fill="#4f4c5a"/>
<rect x="274.07" y="295" width="16.78" height="17" fill="#4f4c5a"/>
<rect x="291.95" y="295" width="16.78" height="17" fill="#4f4c5a"/>
<rect x="309.83" y="295" width="16.78" height="17" fill="#4f4c5a"/>
<rect x="327.71" y="295" width="16.78" height="17" fill="#4f4c5a"/>
<rect x="345.59" y="295" width="16.78" height="17" fill="#4f4c5a"/>
<rect x="363.47" y="295" width="16.78" height="17" fill="#4f4c5a"/>
<rect x="381.35" y="295" width="16.78" height="17" fill="#4f4c5a"/>
<rect x="399.23" y="295" width="16.78" height="17" fill="#4f4c5a"/>
<rect x="417.11" y="295" width="16.78" height="17" fill="#4f4c5a"/>
<rect x="434.98" y="295" width="16.78" height="17" fill="#4f4c5a"/>
<rect x="452.86" y="295" width="16.78" height="17" fill="#ccab91"/>
<rect x="470.74" y="295" width="16.78" height="17" fill="#5cb5a8"/>
<rect x="488.62" y="295" width="16.78" height="17" fill="#5cb5a8"/>
<rect x="506.50" y="295" width="16.78" height="17" fill="#5cb5a8"/>
<rect x="524.38" y="295" width="16.78" height="17" fill="#5cb5a8"/>
<rect x="542.26" y="295" width="16.78" height="17" fill="#5cb5a8"/>
<rect x="560.14" y="295" width="16.78" height="17" fill="#5cb5a8"/>
<rect x="578.02" y="295" width="16.78" height="17" fill="#5cb5a8"/>
<rect x="595.90" y="295" width="16.78" height="17" fill="#5cb5a8"/>
<rect x="613.78" y="295" width="16.78" height="17" fill="#5cb5a8"/>
<rect x="631.66" y="295" width="16.78" height="17" fill="#5cb5a8"/>
<rect x="649.54" y="295" width="16.78" height="17" fill="#5cb5a8"/>
<rect x="667.42" y="295" width="16.78" height="17" fill="#5cb5a8"/>
<rect x="685.29" y="295" width="16.78" height="17" fill="#5cb5a8"/>
<rect x="703.17" y="295" width="16.78" height="17" fill="#5cb5a8"/>
<rect x="721.05" y="295" width="16.78" height="17" fill="#5cb5a8"/>
<rect x="738.93" y="295" width="16.78" height="17" fill="#5cb5a8"/>
<rect x="756.81" y="295" width="16.78" height="17" fill="#4f4c5a"/>
<rect x="774.69" y="295" width="16.78" height="17" fill="#4f4c5a"/>
<rect x="792.57" y="295" width="16.78" height="17" fill="#4f4c5a"/>
<rect x="810.45" y="295" width="16.78" height="17" fill="#4f4c5a"/>
<rect x="828.33" y="295" width="16.78" height="17" fill="#4f4c5a"/>
<rect x="846.21" y="295" width="16.78" height="17" fill="#4f4c5a"/>
<rect x="864.09" y="295" width="16.78" height="17" fill="#4f4c5a"/>
<rect x="881.97" y="295" width="16.78" height="17" fill="#4f4c5a"/>
<rect x="899.85" y="295" width="16.78" height="17" fill="#4f4c5a"/>
<rect x="917.72" y="295" width="16.78" height="17" fill="#4f4c5a"/>
<rect x="935.60" y="295" width="16.78" height="17" fill="#4f4c5a"/>
<rect x="953.48" y="295" width="16.78" height="17" fill="#4f4c5a"/>
<rect x="971.36" y="295" width="16.78" height="17" fill="#4f4c5a"/>
<rect x="989.24" y="295" width="16.78" height="17" fill="#4f4c5a"/>
<rect x="1007.12" y="295" width="16.78" height="17" fill="#4f4c5a"/>
<line x1="31" y1="36.5" x2="1104" y2="36.5" stroke="#9b1c8a" stroke-width="5" stroke-dasharray="10 4.972"/><line x1="31" y1="106.5" x2="1104" y2="106.5" stroke="#9b1c8a" stroke-width="5" stroke-dasharray="10 4.972"/><line x1="33.5" y1="34" x2="33.5" y2="109" stroke="#9b1c8a" stroke-width="5" stroke-dasharray="10 6.250"/><line x1="1101.5" y1="34" x2="1101.5" y2="109" stroke="#9b1c8a" stroke-width="5" stroke-dasharray="10 6.250"/>
<line x1="30" y1="33.5" x2="1105" y2="33.5" stroke="#fbb22b" stroke-width="1" stroke-dasharray="3 2.009"/><line x1="30" y1="331.5" x2="1105" y2="331.5" stroke="#fbb22b" stroke-width="1" stroke-dasharray="3 2.009"/><line x1="30.5" y1="33" x2="30.5" y2="332" stroke="#fbb22b" stroke-width="1" stroke-dasharray="3 2.017"/><line x1="1104.5" y1="33" x2="1104.5" y2="332" stroke="#fbb22b" stroke-width="1" stroke-dasharray="3 2.017"/>
<line x1="31" y1="109.5" x2="1104" y2="109.5" stroke="#fbb22b" stroke-width="1" stroke-dasharray="3 2.000"/><line x1="31" y1="282.5" x2="1104" y2="282.5" stroke="#fbb22b" stroke-width="1" stroke-dasharray="3 2.000"/><line x1="31.5" y1="109" x2="31.5" y2="283" stroke="#fbb22b" stroke-width="1" stroke-dasharray="3 2.029"/><line x1="1103.5" y1="109" x2="1103.5" y2="283" stroke="#fbb22b" stroke-width="1" stroke-dasharray="3 2.029"/>
<line x1="31" y1="283.5" x2="1104" y2="283.5" stroke="#fbb22b" stroke-width="1" stroke-dasharray="3 2.000"/><line x1="31" y1="329.5" x2="1104" y2="329.5" stroke="#fbb22b" stroke-width="1" stroke-dasharray="3 2.000"/><line x1="31.5" y1="283" x2="31.5" y2="330" stroke="#fbb22b" stroke-width="1" stroke-dasharray="3 1.889"/><line x1="1103.5" y1="283" x2="1103.5" y2="330" stroke="#fbb22b" stroke-width="1" stroke-dasharray="3 1.889"/>
</svg>
<div class="panel" style="left:118px;top:367px;width:866px;height:700px"></div>
<div class="abs" style="left:143.00px;top:383.37px;font-family:'Liberation Sans',sans-serif;font-size:20px;line-height:26.00px;font-weight:bold;color:#ececec;white-space:pre;">cal-help-month</div>
<div class="abs" style="right:1267.50px;text-align:right;top:384.27px;font-family:'Liberation Mono',monospace;font-size:15.2px;line-height:19.76px;font-weight:normal;color:#5e5e5e;white-space:pre;">:nivo-heatmap-raw</div>
<div class="col" style="left:133px;top:415px;width:325px;height:603px;background:#0c0d14"></div>
<div class="hd" style="left:133px;top:415px;width:325px;background:#161620">base props</div><svg class="abs" style="left:430px;top:428px" width="16" height="16" viewBox="0 0 16 16"><circle cx="8" cy="8" r="5.9" fill="none" stroke="#3d3e48" stroke-width="1.4"/><rect x="7.3" y="4.3" width="1.4" height="1.4" fill="#3d3e48"/><rect x="7.3" y="6.6" width="1.4" height="5" fill="#3d3e48"/></svg>
<div class="box" style="left:143.5px;top:463px;width:304px;height:403px;">{<span class="k">:labelTextColor</span>
 {<span class="k">:from</span> <span class="s">"color"</span>
  <span class="k">:modifiers</span>
  [[<span class="s">"brighter"</span> <span class="n">1.8</span>]]}
 <span class="k">:cellBorderColor</span>
 {<span class="k">:from</span> <span class="s">"color"</span>
  <span class="k">:modifiers</span> [[<span class="s">"darker"</span> <span class="n">1.8</span>]]}
 <span class="k">:enableLabels false</span>
 <span class="k">:motionDamping</span> <span class="n">9</span>
 <span class="k">:axisBottom nil</span>
 <span class="k">:colors :hf-set1</span>
 <span class="k">:motionStiffness</span> <span class="n">80</span>
 <span class="k">:animate false</span>
 <span class="k">:axisRight nil</span>
 <span class="k">:padding</span> <span class="n">2</span>
 <span class="k">:hoverTarget</span> <span class="s">"cell"</span>
 <span class="k">:cellHoverOthersOpacity</span> <span class="n">0.25</span>}</div>
<div class="col" style="left:466px;top:415px;width:209px;height:603px;background:#0c0d14"></div>
<div class="hd" style="left:466px;top:415px;width:209px;background:#161620">px height</div><svg class="abs" style="left:647px;top:428px" width="16" height="16" viewBox="0 0 16 16"><circle cx="8" cy="8" r="5.9" fill="none" stroke="#3d3e48" stroke-width="1.4"/><rect x="7.3" y="4.3" width="1.4" height="1.4" fill="#3d3e48"/><rect x="7.3" y="6.6" width="1.4" height="5" fill="#3d3e48"/></svg>
<div class="box" style="left:476px;top:463px;width:189px;height:35px;"><span class="n">34</span></div>
<div class="hd" style="left:466px;top:509px;width:209px;background:#161620">px width</div><svg class="abs" style="left:647px;top:521px" width="16" height="16" viewBox="0 0 16 16"><circle cx="8" cy="8" r="5.9" fill="none" stroke="#3d3e48" stroke-width="1.4"/><rect x="7.3" y="4.3" width="1.4" height="1.4" fill="#3d3e48"/><rect x="7.3" y="6.6" width="1.4" height="5" fill="#3d3e48"/></svg>
<div class="box" style="left:476px;top:557px;width:189px;height:35px;"><span class="n">791</span></div>
<div class="hd" style="left:466px;top:603px;width:209px;background:#161620">cell border</div><svg class="abs" style="left:647px;top:615px" width="16" height="16" viewBox="0 0 16 16"><circle cx="8" cy="8" r="5.9" fill="none" stroke="#3d3e48" stroke-width="1.4"/><rect x="7.3" y="4.3" width="1.4" height="1.4" fill="#3d3e48"/><rect x="7.3" y="6.6" width="1.4" height="5" fill="#3d3e48"/></svg>
<div class="box" style="left:476px;top:650px;width:189px;height:83px;"><span class="o">{</span><span class="k">:from</span> <span class="s">"color"</span>
 <span class="k">:modifiers</span>
 [[<span class="s">"darker"</span> <span class="n">1.8</span>]]<span class="o">}</span></div>
<div class="col" style="left:683px;top:415px;width:151px;height:603px;background:#0c0d14"></div>
<div class="hd" style="left:683px;top:415px;width:151px;background:#161620">keys</div>
<div class="box" style="left:693.5px;top:463px;width:130px;height:289px;"><span class="o">[</span><span class="k">:jan</span>
 <span class="k">:feb</span>
 <span class="k">:mar</span>
 <span class="k">:apr</span>
 <span class="k">:may</span>
 <span class="k">:jun</span>
 <span class="k">:jul</span>
 <span class="k">:aug</span>
 <span class="k">:sep</span>
 <span class="k">:oct</span>
 <span class="k">:nov</span>
 <span class="k">:dec</span><span class="o">]</span></div>
<div class="hd" style="left:683px;top:762px;width:151px;background:#161620">margins</div>
<div class="box" style="left:693.5px;top:810px;width:130px;height:106px;"><span class="o">{</span><span class="k">:top</span> <span class="n">8</span>
 <span class="k">:right</span> <span class="n">0</span>
 <span class="k">:bottom</span> <span class="n">-20</span>
 <span class="k">:left</span> <span class="n">31</span><span class="o">}</span></div>
<div class="hd" style="left:683px;top:926px;width:151px;background:#161620">defs</div><svg class="abs" style="left:805px;top:938px" width="16" height="16" viewBox="0 0 16 16"><circle cx="8" cy="8" r="5.9" fill="none" stroke="#3d3e48" stroke-width="1.4"/><rect x="7.3" y="4.3" width="1.4" height="1.4" fill="#3d3e48"/><rect x="7.3" y="6.6" width="1.4" height="5" fill="#3d3e48"/></svg>
<div class="box" style="left:693.5px;top:973px;width:130px;height:35px;"><span class="k">nil</span></div>
<div class="tab" style="left:841px"><span>data &gt;&gt;</span></div>
<div class="tab" style="left:886px"><span>theme &gt;&gt;</span></div>
<div class="tab" style="left:931px"><span>quick docs &gt;&gt;</span></div>
<div class="panel" style="left:1162px;top:30px;width:691px;height:317px"></div>
<div class="abs" style="left:1187.00px;top:45.77px;font-family:'Liberation Sans',sans-serif;font-size:20px;line-height:26.00px;font-weight:bold;color:#ececec;white-space:pre;">co-name</div>
<div class="abs" style="right:398.50px;text-align:right;top:47.57px;font-family:'Liberation Mono',monospace;font-size:15.2px;line-height:19.76px;font-weight:normal;color:#5e5e5e;white-space:pre;">:re-com-raw</div>
<div class="col" style="left:1177px;top:78px;width:287px;height:255px;background:#0c0d14"></div>
<div class="hd" style="left:1177px;top:78px;width:287px;background:#161620">base options</div><svg class="abs" style="left:1413px;top:91px" width="18" height="16" viewBox="0 0 18 16"><circle cx="7.2" cy="8.3" r="2.75" fill="none" stroke="#3d3e48" stroke-width="2.9"/><rect x="9.8" y="6.9" width="7.5" height="2.7" fill="#3d3e48"/><rect x="13.3" y="9.4" width="3" height="2.9" fill="#3d3e48"/></svg><svg class="abs" style="left:1436px;top:91px" width="16" height="16" viewBox="0 0 16 16"><circle cx="8" cy="8" r="5.9" fill="none" stroke="#3d3e48" stroke-width="1.4"/><rect x="7.3" y="4.3" width="1.4" height="1.4" fill="#3d3e48"/><rect x="7.3" y="6.6" width="1.4" height="5" fill="#3d3e48"/></svg>
<div class="box" style="left:1187px;top:126px;width:267px;height:35px;"><span class="o">{</span><span class="k">:label</span> <span class="s">"Hareflow Summer"</span><span class="o">}</span></div>
<div class="col" style="left:1472px;top:78px;width:366px;height:255px;background:#0c0d14"></div>
<div class="hd" style="left:1472px;top:78px;width:366px;background:#161620">style</div><svg class="abs" style="left:1810px;top:91px" width="16" height="16" viewBox="0 0 16 16"><circle cx="8" cy="8" r="5.9" fill="none" stroke="#3d3e48" stroke-width="1.4"/><rect x="7.3" y="4.3" width="1.4" height="1.4" fill="#3d3e48"/><rect x="7.3" y="6.6" width="1.4" height="5" fill="#3d3e48"/></svg>
<div class="box" style="left:1482.5px;top:126.5px;width:345.5px;height:196px;"><span class="o">{</span><span class="k">:font-size</span> <span class="s">"30px"</span>
 <span class="k">:align</span> <span class="s">"center"</span>
 <span class="k">:padding</span> <span class="s">"12px"</span>
 <span class="k">:margin-left</span> <span class="s">"-27px"</span>
 <span class="k">:color</span> <span class="s">"#ff4aff"</span>
 <span class="k">:text-shadow</span> <span class="s">"3px 3px 5px purple"</span>
 <span class="k">:font-family</span> <span class="s">"Homemade Apple"</span>
 <span class="k">:font-weight</span> <span class="n">600</span><span class="o">}</span></div>
<div class="tip" style="left:1714.5px;top:127px;width:200px;height:72px"></div><div class="abs" style="left:1724px;top:131px;width:181px;height:65px;border:2px solid #33122e"></div><svg class="abs" style="left:1807px;top:120px" width="16" height="8" viewBox="0 0 16 8"><path d="M0,8 L8,0 L16,8Z" fill="#000"/></svg>
<div class="abs" style="left:1514.50px;width:600px;text-align:center;top:158.96px;font-family:'Liberation Sans',sans-serif;font-size:16.7px;line-height:21.71px;font-weight:bold;color:#9a9a9a;white-space:pre;">css for this element</div>
<div class="panel" style="left:1059px;top:375px;width:838px;height:317px"></div>
<div class="abs" style="left:1084.00px;top:391.07px;font-family:'Liberation Sans',sans-serif;font-size:20px;line-height:26.00px;font-weight:bold;color:#ececec;white-space:pre;">co-name</div>
<div class="abs" style="right:354.50px;text-align:right;top:392.57px;font-family:'Liberation Mono',monospace;font-size:15.2px;line-height:19.76px;font-weight:normal;color:#5e5e5e;white-space:pre;">:re-com-raw</div>
<div class="col" style="left:1074px;top:423px;width:434px;height:255px;background:#ea6449"></div>
<div class="hd" style="left:1074px;top:423px;width:434px;background:#6b3835">base options</div><svg class="abs" style="left:1440px;top:441px" width="14" height="10" viewBox="0 0 14 10"><rect x="0" y="0.6" width="9.2" height="1.6" fill="#e8604a"/><rect x="10.2" y="0.6" width="1.6" height="1.6" fill="#e8604a"/><rect x="0" y="3.2" width="9.2" height="1.6" fill="#e8604a"/><rect x="10.2" y="3.2" width="1.6" height="1.6" fill="#e8604a"/><rect x="0" y="5.8" width="9.2" height="1.6" fill="#e8604a"/><rect x="10.2" y="5.8" width="1.6" height="1.6" fill="#e8604a"/></svg><svg class="abs" style="left:1459px;top:436px" width="18" height="16" viewBox="0 0 18 16"><circle cx="7.2" cy="8.3" r="2.75" fill="none" stroke="#8c5b57" stroke-width="2.9"/><rect x="9.8" y="6.9" width="7.5" height="2.7" fill="#8c5b57"/><rect x="13.3" y="9.4" width="3" height="2.9" fill="#8c5b57"/></svg><svg class="abs" style="left:1480px;top:436px" width="16" height="16" viewBox="0 0 16 16"><circle cx="8" cy="8" r="5.9" fill="none" stroke="#8c5b57" stroke-width="1.4"/><rect x="7.3" y="4.3" width="1.4" height="1.4" fill="#8c5b57"/><rect x="7.3" y="6.6" width="1.4" height="5" fill="#8c5b57"/></svg>
<div class="box" style="left:1084px;top:471px;width:414px;height:36px;border-color:#0a0c12"><span class="o">{</span><span class="k">:label</span> <span class="s">"Hareflow Summer"</span>, <span class="k">:lasagna</span> <span class="n">1</span><span class="o">}</span></div>
<div class="col" style="left:1516px;top:423px;width:366px;height:255px;background:#0c0d14"></div>
<div class="hd" style="left:1516px;top:423px;width:366px;background:#161620">style</div><svg class="abs" style="left:1853px;top:436px" width="16" height="16" viewBox="0 0 16 16"><circle cx="8" cy="8" r="5.9" fill="none" stroke="#3d3e48" stroke-width="1.4"/><rect x="7.3" y="4.3" width="1.4" height="1.4" fill="#3d3e48"/><rect x="7.3" y="6.6" width="1.4" height="5" fill="#3d3e48"/></svg>
<div class="box" style="left:1526px;top:471.5px;width:346px;height:196px;"><span class="o">{</span><span class="k">:font-size</span> <span class="s">"30px"</span>
 <span class="k">:align</span> <span class="s">"center"</span>
 <span class="k">:padding</span> <span class="s">"12px"</span>
 <span class="k">:margin-left</span> <span class="s">"-27px"</span>
 <span class="k">:color</span> <span class="s">"#ff4aff"</span>
 <span class="k">:text-shadow</span> <span class="s">"3px 3px 5px purple"</span>
 <span class="k">:font-family</span> <span class="s">"Homemade Apple"</span>
 <span class="k">:font-weight</span> <span class="n">600</span><span class="o">}</span></div>
<div class="tip" style="left:1354.6px;top:472.4px;width:181.4px;height:131.5px"></div><div class="abs" style="left:1364.2px;top:476.8px;width:162.5px;height:124px;border:2px solid #33122e"></div><svg class="abs" style="left:1437.3px;top:465.6px" width="16" height="7.7999999999999545" viewBox="0 0 16 7.7999999999999545"><path d="M0,7.7999999999999545 L8,0 L16,7.7999999999999545Z" fill="#000"/></svg>
<div class="abs" style="left:1145.50px;width:600px;text-align:center;top:488.39px;font-family:'Liberation Sans',sans-serif;font-size:24.4px;line-height:31.72px;font-weight:bold;color:#f0604a;white-space:pre;">key warning</div>
<div class="abs" style="left:1145.50px;width:600px;text-align:center;top:540.64px;font-family:'Liberation Mono',monospace;font-size:17.3px;line-height:22.49px;font-weight:bold;color:#a8a8a8;white-space:pre;">unknown keys</div>
<div class="abs" style="left:1145.50px;width:600px;text-align:center;top:565.37px;font-family:'Liberation Mono',monospace;font-size:17.6px;line-height:22.88px;font-weight:bold;color:#f0a830;white-space:pre;">(:lasagna)</div>
<div class="panel" style="left:1059px;top:710px;width:691px;height:317px"></div>
<div class="abs" style="left:1084.00px;top:726.07px;font-family:'Liberation Sans',sans-serif;font-size:20px;line-height:26.00px;font-weight:bold;color:#ececec;white-space:pre;">co-name</div>
<div class="abs" style="right:501.50px;text-align:right;top:727.87px;font-family:'Liberation Mono',monospace;font-size:15.2px;line-height:19.76px;font-weight:normal;color:#5e5e5e;white-space:pre;">:re-com-raw</div>
<div class="col" style="left:1074px;top:758.5px;width:287px;height:253.5px;background:#0c0d14"></div>
<div class="hd" style="left:1074px;top:758.5px;width:287px;background:#161620">base options</div><svg class="abs" style="left:1313px;top:771px" width="18" height="16" viewBox="0 0 18 16"><circle cx="7.2" cy="8.3" r="2.75" fill="none" stroke="#3d3e48" stroke-width="2.9"/><rect x="9.8" y="6.9" width="7.5" height="2.7" fill="#3d3e48"/><rect x="13.3" y="9.4" width="3" height="2.9" fill="#3d3e48"/></svg><svg class="abs" style="left:1333px;top:771px" width="16" height="16" viewBox="0 0 16 16"><circle cx="8" cy="8" r="5.9" fill="none" stroke="#3d3e48" stroke-width="1.4"/><rect x="7.3" y="4.3" width="1.4" height="1.4" fill="#3d3e48"/><rect x="7.3" y="6.6" width="1.4" height="5" fill="#3d3e48"/></svg>
<div class="box" style="left:1084.4px;top:806px;width:267px;height:35.5px;"><span class="o">{</span><span class="k">:label</span> <span class="s">"Hareflow Summer"</span><span class="o">}</span></div>
<div class="col" style="left:1369px;top:758.5px;width:366px;height:253.5px;background:#0c0d14"></div>
<div class="hd" style="left:1369px;top:758.5px;width:366px;background:#161620">style</div><svg class="abs" style="left:1706px;top:771px" width="16" height="16" viewBox="0 0 16 16"><circle cx="8" cy="8" r="5.9" fill="none" stroke="#3d3e48" stroke-width="1.4"/><rect x="7.3" y="4.3" width="1.4" height="1.4" fill="#3d3e48"/><rect x="7.3" y="6.6" width="1.4" height="5" fill="#3d3e48"/></svg>
<div class="box" style="left:1379.3px;top:806.2px;width:345.3px;height:196.3px;"><span class="o">{</span><span class="k">:font-size</span> <span class="s">"30px"</span>
 <span class="k">:align</span> <span class="s">"center"</span>
 <span class="k">:padding</span> <span class="s">"12px"</span>
 <span class="k">:margin-left</span> <span class="s">"-27px"</span>
 <span class="k">:color</span> <span class="s">"#ff4aff"</span>
 <span class="k">:text-shadow</span> <span class="s">"3px 3px 5px purple"</span>
 <span class="k">:font-family</span> <span class="s">"Homemade Apple"</span>
 <span class="k">:font-weight</span> <span class="n">600</span><span class="o">}</span></div>
<div class="tip" style="left:1159.4px;top:807.8px;width:315.2px;height:182.5px"></div><div class="abs" style="left:1169px;top:811.6px;width:295.3px;height:174.3px;border:2px solid #33122e"></div><svg class="abs" style="left:1309px;top:800.4px" width="16" height="8.399999999999977" viewBox="0 0 16 8.399999999999977"><path d="M0,8.399999999999977 L8,0 L16,8.399999999999977Z" fill="#000"/></svg>
<div class="abs" style="left:1016.70px;width:600px;text-align:center;top:823.29px;font-family:'Liberation Sans',sans-serif;font-size:24.8px;line-height:32.24px;font-weight:bold;color:#ececec;white-space:pre;">keys allowed / required</div>
<div class="abs" style="left:1270.50px;top:874.82px;font-family:'Liberation Mono',monospace;font-size:17px;line-height:22.10px;font-weight:bold;color:#ebe62a;white-space:pre;">:label *</div>
<div class="abs" style="left:1270.50px;top:899.92px;font-family:'Liberation Mono',monospace;font-size:17px;line-height:22.10px;font-weight:bold;color:#9a9a9a;white-space:pre;">:on-click</div>
<div class="abs" style="left:1270.50px;top:924.92px;font-family:'Liberation Mono',monospace;font-size:17px;line-height:22.10px;font-weight:bold;color:#9a9a9a;white-space:pre;">:style</div>
<div class="abs" style="left:1270.50px;top:949.92px;font-family:'Liberation Mono',monospace;font-size:17px;line-height:22.10px;font-weight:bold;color:#9a9a9a;white-space:pre;">:attr</div>
<svg class="abs" style="left:1960px;top:100px;overflow:visible" width="240" height="580" viewBox="0 0 240 580">
<defs>
<linearGradient id="navbg" x1="0" y1="0" x2="0" y2="1">
<stop offset="0" stop-color="#4f5698"/><stop offset="0.665" stop-color="#4e5597"/><stop offset="0.675" stop-color="#51498f"/><stop offset="1" stop-color="#57418b"/></linearGradient>
<clipPath id="navclip"><rect x="13.5" y="14.5" width="182" height="548"/></clipPath>
<clipPath id="ballclip"><circle cx="98" cy="110" r="54"/></clipPath>
<radialGradient id="ballshade" cx="0.35" cy="0.3" r="0.8"><stop offset="0" stop-color="#fff" stop-opacity="0.08"/><stop offset="0.6" stop-color="#000" stop-opacity="0"/><stop offset="1" stop-color="#000" stop-opacity="0.22"/></radialGradient>
<radialGradient id="pole" cx="0.62" cy="0.65" r="0.7"><stop offset="0.45" stop-color="#ffffff"/><stop offset="0.8" stop-color="#ece4ee"/><stop offset="1" stop-color="#9a7a9a"/></radialGradient>
<filter id="glow" x="-30%" y="-30%" width="160%" height="160%">
<feGaussianBlur in="SourceAlpha" stdDeviation="2.5" result="b"/>
<feOffset in="b" dx="3" dy="3" result="o"/>
<feFlood flood-color="#800080" flood-opacity="1"/><feComposite in2="o" operator="in" result="sh"/>
<feMerge><feMergeNode in="sh"/><feMergeNode in="SourceGraphic"/></feMerge>
</filter>
<filter id="btnsh" x="-10%" y="-20%" width="130%" height="160%"><feDropShadow dx="2" dy="3" stdDeviation="2.5" flood-color="#1a1040" flood-opacity="0.5"/></filter>
</defs>
<rect x="13.5" y="14.5" width="182" height="548" fill="url(#navbg)"/>
<g clip-path="url(#navclip)">
<path d="M13.0,43.0 Q50.0,50.0 80.0,72.0 L196.0,115.0 L196.0,192.0 Q105.0,180.0 13.0,200.0 Z" fill="#33206a" opacity="0.22"/>
<path d="M13.0,106.0 L100.0,106.0 L100.0,175.0 Q50.0,162.0 13.0,150.0 Z" fill="#33206a" opacity="0.12"/>
<polygon points="13.0,445.0 100.0,500.0 196.0,460.0 196.0,563.0 13.0,563.0" fill="#3c1c6a" opacity="0.15"/>
<polygon points="13.0,460.0 90.0,515.0 13.0,550.0" fill="#3c1c6a" opacity="0.22"/>
</g>
<g clip-path="url(#ballclip)">
<circle cx="98" cy="110" r="54" fill="#7e0c7a"/>
<path d="M94.5,133.2 Q70.0,105.0 67.0,66.0 L30.0,40.0 L30.0,150.0 L49.0,131.0 Z" fill="#3a84f2"/>
<path d="M94.5,133.2 Q114.0,102.0 139.0,74.0 L165.0,80.0 L158.0,114.0 L152.0,112.0 Q125.0,122.0 94.5,133.2 Z" fill="#ee2a7b"/>
<path d="M94.5,133.2 Q125.0,122.0 153.0,111.0 L170.0,115.0 L160.0,160.0 L132.0,162.0 Q112.0,150.0 94.5,133.2 Z" fill="#3a84f2"/>
<path d="M94.5,133.2 Q70.0,132.0 49.0,131.0 L35.0,165.0 L80.0,168.0 Q84.0,150.0 94.5,133.2 Z" fill="#ee2a7b"/>
<circle cx="98" cy="110" r="54" fill="url(#ballshade)"/>
</g>
<circle cx="94.5" cy="133.2" r="15.5" fill="url(#pole)"/>
<rect x="34" y="235" width="140" height="38" fill="#fbb92c" filter="url(#btnsh)"/>
<g transform="translate(-1960,-100)" opacity="0.55"><line x1="1994" y1="335.5" x2="2134" y2="335.5" stroke="#f09a18" stroke-width="1" stroke-dasharray="3 2.074"/><line x1="1994" y1="372.5" x2="2134" y2="372.5" stroke="#f09a18" stroke-width="1" stroke-dasharray="3 2.074"/><line x1="1994.5" y1="335" x2="1994.5" y2="373" stroke="#f09a18" stroke-width="1" stroke-dasharray="3 2.000"/><line x1="2133.5" y1="335" x2="2133.5" y2="373" stroke="#f09a18" stroke-width="1" stroke-dasharray="3 2.000"/></g>
<g fill="none" stroke="#000" stroke-width="2.3" stroke-linecap="round" stroke-linejoin="round">
<path d="M54.6,253.2 C53.9,253.5 51.7,253.7 50.7,254.9 C49.7,256.1 48.5,259.2 48.4,260.5 C48.3,261.8 49.1,262.7 50.1,262.7 C51.0,262.7 53.2,261.6 54.1,260.5 C54.9,259.4 55.3,257.1 55.2,256.0 C55.1,254.9 53.4,253.9 53.5,253.7 C53.6,253.5 54.9,254.8 55.7,254.9 C56.5,255.0 57.8,253.6 58.5,254.3 C59.2,255.1 59.8,258.0 60.2,259.4 C60.6,260.8 60.2,262.7 60.8,262.7 C61.4,262.7 62.7,260.8 63.6,259.4 C64.5,258.0 65.5,255.3 66.4,254.3 C67.3,253.3 68.7,253.4 69.2,253.2"/>
<path d="M69.2,253.2 C69.6,254.0 70.8,258.0 71.5,258.2 C72.2,258.4 73.7,255.3 73.7,254.3 C73.7,253.3 72.4,252.0 71.5,252.1 C70.6,252.2 68.8,253.5 68.1,254.9 C67.3,256.3 66.7,259.2 67.0,260.5 C67.3,261.8 68.5,262.8 69.8,262.7 C71.1,262.6 73.5,261.2 74.9,259.9 C76.3,258.6 77.3,256.1 78.2,254.9 C79.1,253.7 79.8,252.6 80.5,252.6 C81.2,252.6 82.5,253.4 82.7,254.9 C82.9,256.4 81.2,261.3 81.6,261.6 C82.0,261.9 83.9,258.0 85.0,256.5 C86.1,255.0 87.4,253.2 88.3,252.6 C89.2,252.1 89.9,252.3 90.6,253.2 C91.3,254.0 91.7,256.2 92.3,257.7 C92.9,259.2 93.2,262.1 94.0,262.2 C94.8,262.3 96.2,259.7 97.3,258.2 C98.4,256.7 99.8,254.3 100.7,253.2 C101.5,252.1 101.8,251.4 102.4,251.5 C103.1,251.6 103.7,252.1 104.6,253.7 C105.4,255.3 106.5,259.7 107.5,261.0 C108.5,262.3 109.5,262.4 110.8,261.6 C112.1,260.9 114.6,257.4 115.3,256.5"/>
<path d="M109.7,260.5 C110.5,260.1 113.5,259.2 114.8,258.2 C116.1,257.2 117.5,255.3 117.6,254.3 C117.7,253.3 116.3,252.0 115.3,252.1 C114.3,252.2 112.2,253.6 111.4,254.9 C110.6,256.2 110.0,258.6 110.3,259.9 C110.6,261.2 111.7,262.6 113.1,262.7 C114.5,262.8 117.1,261.6 118.7,260.5 C120.3,259.4 121.4,257.3 122.6,256.0 C123.8,254.7 125.2,252.8 126.0,252.6 C126.8,252.4 127.3,253.4 127.7,254.9 C128.1,256.4 127.6,260.9 128.3,261.6 C129.1,262.4 131.0,260.8 132.2,259.4 C133.4,258.0 134.8,253.9 135.6,253.2 C136.3,252.4 136.1,253.4 136.7,254.9 C137.2,256.4 137.9,261.3 138.9,262.2 C139.9,263.1 141.8,261.7 142.9,260.5 C144.0,259.3 145.3,256.2 145.7,254.9 C146.1,253.6 145.2,253.0 145.1,252.6"/>
<path d="M155.8,244.7 C154.9,246.8 151.1,255.0 150.2,257.1"/>
</g>
<circle cx="112.2" cy="249.8" r="1.5" fill="#000"/>
<circle cx="149.6" cy="260.5" r="1.5" fill="#000"/>
<rect x="34" y="284" width="140" height="42" fill="#fbb92c"/>
<g transform="translate(-1960,-100)" opacity="0.55"><line x1="1994" y1="384.5" x2="2134" y2="384.5" stroke="#f09a18" stroke-width="1" stroke-dasharray="3 2.074"/><line x1="1994" y1="425.5" x2="2134" y2="425.5" stroke="#f09a18" stroke-width="1" stroke-dasharray="3 2.074"/><line x1="1994.5" y1="384" x2="1994.5" y2="426" stroke="#f09a18" stroke-width="1" stroke-dasharray="3 1.875"/><line x1="2133.5" y1="384" x2="2133.5" y2="426" stroke="#f09a18" stroke-width="1" stroke-dasharray="3 1.875"/></g>
<g fill="none" stroke="#000" stroke-width="2.3" stroke-linecap="round" stroke-linejoin="round">
<path d="M47.3,312.4 C47.9,311.1 49.8,307.4 51.2,304.5 C52.6,301.6 54.5,297.1 55.7,295.0 C56.9,292.9 57.9,291.6 58.5,291.6 C59.1,291.6 59.6,293.1 59.1,295.0 C58.6,296.9 56.7,300.6 55.7,302.9 C54.7,305.1 53.5,307.1 52.9,308.5 C52.4,309.9 52.5,310.8 52.4,311.3"/>
<path d="M54.1,306.8 C54.6,306.1 56.2,303.4 56.9,302.9 C57.6,302.4 58.6,302.7 58.5,304.0 C58.4,305.3 56.2,309.6 56.3,310.7 C56.4,311.8 58.1,311.2 59.1,310.7 C60.1,310.1 61.8,308.7 62.5,307.4 C63.2,306.1 63.7,302.5 63.6,302.9 C63.5,303.3 61.8,308.2 61.9,309.6 C62.0,311.0 63.2,311.7 64.2,311.3 C65.2,310.9 66.9,308.6 68.1,307.4 C69.3,306.2 71.1,304.0 71.5,304.0 C71.9,304.0 70.0,306.5 70.4,307.4 C70.8,308.3 73.7,309.1 73.7,309.6 C73.7,310.2 70.4,310.9 70.4,310.7 C70.4,310.5 72.4,309.1 73.7,308.5 C75.0,307.9 77.5,307.6 78.2,307.4"/>
<path d="M86.1,291.1 C85.5,293.1 83.5,299.6 82.7,302.9 C82.0,306.2 81.2,309.5 81.6,310.7 C82.0,311.9 83.9,310.8 85.0,310.2 C86.1,309.6 87.8,307.9 88.3,307.4"/>
<path d="M79.3,296.4 C81.6,296.3 91.1,296.2 93.4,296.1"/>
<path d="M92.8,302.9 C92.2,303.3 89.6,303.9 88.9,305.1 C88.3,306.3 88.3,309.4 88.9,310.2 C89.6,310.9 91.9,310.6 92.8,309.6 C93.7,308.7 94.5,305.6 94.5,304.5 C94.5,303.4 92.5,302.9 92.8,302.9 C93.1,302.9 95.1,304.3 96.2,304.5 C97.3,304.7 98.7,304.4 99.6,304.0 C100.5,303.6 101.2,302.3 101.8,302.3 C102.5,302.3 103.4,302.6 103.5,304.0 C103.6,305.4 102.0,310.3 102.4,310.7 C102.8,311.1 104.7,307.5 105.8,306.2 C106.9,304.9 108.2,303.4 109.1,302.9 C110.0,302.4 110.6,303.4 111.4,303.4 C112.3,303.4 113.9,301.9 114.2,302.9 C114.5,303.9 112.8,308.2 113.1,309.6 C113.4,311.0 114.8,311.7 115.9,311.3 C117.0,310.9 119.2,308.0 119.8,307.4"/>
<path d="M126.6,302.3 C126.0,302.2 124.2,301.1 123.2,301.7 C122.2,302.3 120.6,304.7 120.4,306.2 C120.2,307.7 120.9,310.1 122.1,310.7 C123.3,311.3 126.0,310.2 127.7,309.6 C129.4,309.0 130.3,308.1 132.2,306.8 C134.1,305.5 138.5,302.4 138.9,301.7 C139.3,300.9 135.5,301.4 134.4,302.3 C133.3,303.2 132.2,306.0 132.2,307.4 C132.2,308.8 133.4,310.6 134.4,310.7 C135.4,310.8 137.5,309.2 138.4,307.9 C139.4,306.6 139.9,302.8 140.1,302.9 C140.3,303.0 139.3,307.2 139.5,308.5 C139.7,309.8 140.2,310.7 141.2,310.7 C142.2,310.7 144.0,310.3 145.7,308.5 C147.4,306.7 149.8,302.5 151.3,300.1 C152.8,297.7 154.2,295.1 154.7,293.9 C155.2,292.7 154.8,291.9 154.1,292.7 C153.3,293.5 151.4,296.3 150.2,298.9 C149.0,301.5 147.0,306.5 146.8,308.5 C146.6,310.5 147.9,310.7 149.1,310.7 C150.3,310.7 152.5,309.5 154.1,308.5 C155.7,307.5 157.8,305.2 158.6,304.5"/>
</g>
<circle cx="64.5" cy="299.2" r="1.5" fill="#000"/>
<circle cx="117.3" cy="298.6" r="1.5" fill="#000"/>
<rect x="34" y="338" width="140" height="42" fill="#fbb92c"/>
<g transform="translate(-1960,-100)" opacity="0.55"><line x1="1994" y1="438.5" x2="2134" y2="438.5" stroke="#f09a18" stroke-width="1" stroke-dasharray="3 2.074"/><line x1="1994" y1="479.5" x2="2134" y2="479.5" stroke="#f09a18" stroke-width="1" stroke-dasharray="3 2.074"/><line x1="1994.5" y1="438" x2="1994.5" y2="480" stroke="#f09a18" stroke-width="1" stroke-dasharray="3 1.875"/><line x1="2133.5" y1="438" x2="2133.5" y2="480" stroke="#f09a18" stroke-width="1" stroke-dasharray="3 1.875"/></g>
<g fill="none" stroke="#000" stroke-width="2.3" stroke-linecap="round" stroke-linejoin="round">
<path d="M59.1,354.1 C58.3,354.0 55.8,352.6 54.1,353.5 C52.4,354.4 49.8,358.0 49.0,359.7 C48.2,361.4 48.7,363.1 49.6,363.6 C50.4,364.1 52.6,363.6 54.1,362.5 C55.6,361.4 57.3,359.7 58.5,356.9 C59.7,354.1 61.6,345.6 61.4,345.6 C61.2,345.6 58.4,354.1 57.4,356.9 C56.5,359.7 55.6,361.3 55.7,362.5 C55.8,363.7 56.9,364.6 58.0,364.2 C59.1,363.8 61.8,360.9 62.5,360.2"/>
<path d="M71.5,355.7 C70.8,355.8 68.3,355.4 67.0,356.3 C65.7,357.2 63.8,360.1 63.6,361.4 C63.4,362.7 64.8,364.2 65.9,364.2 C67.0,364.2 69.3,362.7 70.4,361.4 C71.5,360.1 72.4,356.3 72.6,356.3 C72.8,356.3 71.3,360.1 71.5,361.4 C71.7,362.7 72.6,364.2 73.7,364.2 C74.8,364.2 77.5,361.9 78.2,361.4"/>
<path d="M85.0,355.7 C84.3,355.8 82.0,355.4 81.0,356.3 C80.0,357.2 78.8,360.2 78.8,361.4 C78.8,362.6 80.0,363.7 81.0,363.6 C82.0,363.5 84.2,361.9 85.0,360.8 C85.8,359.7 86.5,356.0 86.1,356.9 C85.7,357.8 84.8,363.3 82.7,365.9 C80.6,368.5 76.1,370.9 73.7,372.6 C71.3,374.3 68.8,374.9 68.1,376.0 C67.3,377.1 68.1,379.7 69.2,379.3 C70.3,378.9 72.8,376.1 74.9,373.7 C77.0,371.3 79.2,367.2 81.6,364.7 C84.0,362.2 88.2,359.5 89.5,358.5"/>
<path d="M96.2,364.2 C96.8,363.0 98.4,359.5 99.6,356.9 C100.8,354.3 102.7,350.0 103.5,348.4 C104.3,346.8 104.7,346.6 104.6,347.3 C104.5,348.0 104.0,350.3 103.0,352.4 C102.0,354.5 99.5,357.8 98.5,359.7 C97.5,361.6 96.6,362.8 96.8,363.6 C97.0,364.4 98.3,365.1 99.6,364.7 C100.9,364.3 103.1,362.7 104.6,361.4 C106.1,360.1 108.2,356.5 108.6,356.9 C109.0,357.3 106.7,362.3 106.9,363.6 C107.1,364.9 108.7,365.0 109.7,364.7 C110.7,364.4 112.0,363.0 113.1,361.9 C114.2,360.8 116.0,358.1 116.4,358.0 C116.8,357.9 114.9,360.5 115.3,361.4 C115.7,362.3 118.8,363.1 118.7,363.6 C118.6,364.2 114.8,364.9 114.8,364.7 C114.8,364.5 117.4,363.1 118.7,362.5 C120.0,361.9 121.9,361.6 122.6,361.4"/>
<path d="M132.2,343.9 C131.5,346.1 129.2,353.6 128.3,356.9 C127.5,360.2 126.8,362.4 127.1,363.6 C127.4,364.8 128.5,364.9 129.9,364.2 C131.3,363.5 134.4,360.8 135.6,359.7 C136.8,358.6 136.9,357.8 137.2,357.4"/>
<path d="M124.3,350.1 C126.7,349.9 136.5,349.2 138.9,349.0"/>
</g>
<circle cx="110.3" cy="351.8" r="1.5" fill="#000"/>
<rect x="34" y="391" width="140" height="43" fill="#fbb92c"/>
<g transform="translate(-1960,-100)" opacity="0.55"><line x1="1994" y1="491.5" x2="2134" y2="491.5" stroke="#f09a18" stroke-width="1" stroke-dasharray="3 2.074"/><line x1="1994" y1="533.5" x2="2134" y2="533.5" stroke="#f09a18" stroke-width="1" stroke-dasharray="3 2.074"/><line x1="1994.5" y1="491" x2="1994.5" y2="534" stroke="#f09a18" stroke-width="1" stroke-dasharray="3 2.000"/><line x1="2133.5" y1="491" x2="2133.5" y2="534" stroke="#f09a18" stroke-width="1" stroke-dasharray="3 2.000"/></g>
<g fill="none" stroke="#000" stroke-width="2.3" stroke-linecap="round" stroke-linejoin="round">
<path d="M47.3,417.7 C47.9,416.8 50.2,413.6 51.2,412.1 C52.2,410.6 53.0,408.8 53.5,408.7 C54.0,408.6 54.2,410.2 54.1,411.5 C54.0,412.8 52.6,416.3 52.9,416.6 C53.2,416.9 54.7,414.3 55.7,413.2 C56.7,412.1 58.1,410.4 59.1,409.9 C60.0,409.3 61.5,408.8 61.4,409.9 C61.3,411.0 58.6,415.2 58.5,416.6 C58.4,418.0 59.8,418.7 60.8,418.3 C61.8,417.9 63.6,415.8 64.7,414.4 C65.8,413.0 67.2,409.7 67.5,409.9 C67.8,410.1 66.3,414.1 66.4,415.5 C66.5,416.9 67.2,418.3 68.1,418.3 C68.9,418.3 70.4,416.8 71.5,415.5 C72.6,414.2 74.2,411.3 74.9,410.4 C75.7,409.5 76.2,408.7 76.0,409.9 C75.8,411.1 73.5,417.2 73.7,417.7 C73.9,418.3 75.8,414.6 77.1,413.2 C78.4,411.8 80.5,409.7 81.6,409.3 C82.7,408.9 83.6,409.8 83.8,411.0 C84.0,412.2 82.2,415.6 82.7,416.6 C83.2,417.6 86.0,417.1 86.7,417.2"/>
<path d="M95.6,417.7 C96.3,416.2 98.3,411.6 99.6,408.7 C100.9,405.8 102.7,401.4 103.5,400.3 C104.3,399.2 104.8,400.6 104.6,402.0 C104.4,403.4 103.5,406.6 102.4,408.7 C101.3,410.8 98.8,412.8 97.9,414.4 C97.0,416.0 96.3,417.7 96.8,418.3 C97.3,418.8 99.1,418.6 100.7,417.7 C102.3,416.9 104.4,414.2 106.3,413.2 C108.2,412.2 111.8,411.7 112.0,411.5 C112.2,411.3 108.5,411.2 107.5,412.1 C106.5,413.0 105.5,415.6 105.8,416.6 C106.1,417.6 107.9,418.5 109.1,418.3 C110.3,418.1 112.3,416.6 113.1,415.5 C113.8,414.4 113.8,412.2 113.6,411.5 C113.4,410.8 111.7,411.3 112.0,411.5 C112.3,411.7 114.2,412.6 115.3,412.7 C116.4,412.8 117.9,412.3 118.7,412.1 C119.4,411.9 120.1,410.8 119.8,411.5 C119.5,412.2 117.0,415.6 117.0,416.6 C117.0,417.6 118.9,418.1 119.8,417.7 C120.7,417.3 122.2,413.8 122.6,414.4 C123.0,415.0 123.7,419.1 122.1,421.1 C120.5,423.1 115.3,424.8 113.1,426.2 C110.8,427.6 109.1,428.5 108.6,429.5 C108.1,430.5 109.1,432.8 110.3,432.3 C111.5,431.8 114.0,428.9 115.9,426.7 C117.8,424.6 119.5,421.4 121.5,419.4 C123.5,417.3 125.8,416.0 127.7,414.4 C129.6,412.8 131.4,410.8 132.7,409.9 C134.0,409.0 135.5,408.8 135.6,409.3 C135.7,409.9 133.0,412.0 133.3,413.2 C133.6,414.4 137.4,415.9 137.2,416.6 C137.0,417.4 133.6,417.5 132.2,417.7 C130.8,417.9 128.1,417.9 128.8,417.7 C129.6,417.5 134.4,417.4 136.7,416.6 C138.9,415.8 141.4,413.4 142.3,412.7"/>
</g>
<rect x="34" y="445" width="140" height="43" fill="#fbb92c"/>
<g transform="translate(-1960,-100)" opacity="0.55"><line x1="1994" y1="545.5" x2="2134" y2="545.5" stroke="#f09a18" stroke-width="1" stroke-dasharray="3 2.074"/><line x1="1994" y1="587.5" x2="2134" y2="587.5" stroke="#f09a18" stroke-width="1" stroke-dasharray="3 2.074"/><line x1="1994.5" y1="545" x2="1994.5" y2="588" stroke="#f09a18" stroke-width="1" stroke-dasharray="3 2.000"/><line x1="2133.5" y1="545" x2="2133.5" y2="588" stroke="#f09a18" stroke-width="1" stroke-dasharray="3 2.000"/></g>
<text x="40" y="460.8" font-family="Liberation Mono" font-weight="bold" font-size="11.2" fill="#9c9e98">:box#btn5 @</text>
<rect x="34" y="499" width="140" height="42" fill="#fbb92c"/>
<g transform="translate(-1960,-100)" opacity="0.55"><line x1="1994" y1="599.5" x2="2134" y2="599.5" stroke="#f09a18" stroke-width="1" stroke-dasharray="3 2.074"/><line x1="1994" y1="640.5" x2="2134" y2="640.5" stroke="#f09a18" stroke-width="1" stroke-dasharray="3 2.074"/><line x1="1994.5" y1="599" x2="1994.5" y2="641" stroke="#f09a18" stroke-width="1" stroke-dasharray="3 1.875"/><line x1="2133.5" y1="599" x2="2133.5" y2="641" stroke="#f09a18" stroke-width="1" stroke-dasharray="3 1.875"/></g>
<text x="40" y="514.8" font-family="Liberation Mono" font-weight="bold" font-size="11.2" fill="#9c9e98">:box#btn6 @</text>
<g transform="translate(-1960,-100)"><line x1="1973" y1="114.5" x2="2156" y2="114.5" stroke="#fbb22b" stroke-width="1" stroke-dasharray="3 2.000"/><line x1="1973" y1="662.5" x2="2156" y2="662.5" stroke="#fbb22b" stroke-width="1" stroke-dasharray="3 2.000"/><line x1="1973.5" y1="114" x2="1973.5" y2="663" stroke="#fbb22b" stroke-width="1" stroke-dasharray="3 2.009"/><line x1="2155.5" y1="114" x2="2155.5" y2="663" stroke="#fbb22b" stroke-width="1" stroke-dasharray="3 2.009"/></g>
<polygon points="113.0,31.0 213.0,172.0 116.0,239.0 16.0,98.0" fill="none" stroke="#9b1c8a" stroke-width="5" stroke-dasharray="10 5"/>
<g filter="url(#glow)" fill="none" stroke="#ff4aff" stroke-width="4.3" stroke-linecap="round" stroke-linejoin="round">
<path d="M33.3,118.2 C33.7,121.0 35.1,129.6 36.0,135.3 C36.9,141.0 38.3,149.5 38.7,152.3"/>
<path d="M31.7,138.5 C31.1,137.8 28.3,135.3 28.0,134.2 C27.7,133.1 28.8,131.9 30.1,132.1 C31.4,132.3 33.6,135.0 36.0,135.3 C38.4,135.7 41.3,135.6 44.5,134.2 C47.7,132.8 52.5,128.6 55.2,126.8 C57.9,125.0 59.6,124.1 60.5,123.6"/>
<path d="M42.4,105.4 C42.9,107.7 44.3,113.3 45.6,119.3 C46.8,125.4 49.2,138.0 49.9,141.7"/>
<path d="M55.4,125.2 C56.2,124.2 59.0,121.1 60.2,119.1 C61.5,117.1 62.8,113.1 62.9,113.0 C63.0,112.9 61.1,115.7 60.9,118.4 C60.7,121.1 60.8,126.9 61.5,129.3 C62.2,131.7 63.7,132.7 64.9,132.7 C66.2,132.7 68.1,131.0 69.0,129.3 C69.9,127.6 70.4,124.8 70.4,122.5 C70.4,120.2 70.1,117.3 69.0,115.7 C67.9,114.1 64.5,113.5 63.6,113.0"/>
<path d="M69.6,116.0 C69.7,117.1 70.1,120.8 70.4,122.5 C70.7,124.2 70.8,126.0 71.5,126.0 C72.2,126.0 73.0,123.8 74.4,122.5 C75.8,121.2 79.1,120.4 79.9,118.4 C80.7,116.4 79.2,113.0 79.2,110.3 C79.2,107.6 79.3,103.6 79.9,102.1 C80.5,100.6 81.9,100.8 82.6,101.5 C83.3,102.2 83.0,105.0 83.9,106.2 C84.8,107.4 86.4,108.2 88.0,108.9 C89.6,109.6 91.8,110.5 93.4,110.3 C95.0,110.1 95.8,109.2 97.5,107.6 C99.2,106.0 102.0,103.5 103.6,100.8 C105.2,98.1 106.7,93.9 107.0,91.3 C107.3,88.7 106.5,86.1 105.6,85.2 C104.7,84.3 102.7,84.7 101.6,85.9 C100.5,87.1 99.0,90.3 98.8,92.6 C98.6,94.8 99.3,97.6 100.2,99.4 C101.1,101.2 102.7,103.5 104.3,103.5 C105.9,103.5 107.9,101.3 109.7,99.4 C111.5,97.5 113.6,94.0 115.1,92.0 C116.6,90.0 117.7,91.6 118.5,87.5 C119.3,83.4 119.7,72.8 120.2,67.3 C120.7,61.8 120.4,57.6 121.4,54.5 C122.4,51.4 124.6,49.1 126.0,48.7 C127.4,48.3 129.4,49.1 130.1,52.2 C130.8,55.3 130.6,62.3 130.1,67.3 C129.6,72.3 128.1,79.1 127.2,82.4 C126.3,85.7 125.1,83.6 124.9,87.1 C124.7,90.6 125.2,98.0 126.0,103.4 C126.8,108.8 127.9,116.6 129.5,119.7 C131.1,122.8 133.8,123.2 135.3,122.0 C136.9,120.8 138.6,116.6 138.8,112.7 C139.0,108.8 138.1,102.6 136.5,98.7 C134.9,94.8 131.6,91.7 129.5,89.4 C127.4,87.1 122.9,85.8 123.7,84.8 C124.5,83.8 131.5,84.4 134.2,83.6 C136.9,82.8 139.3,83.0 140.0,80.1 C140.7,77.2 139.0,71.2 138.3,66.2 C137.6,61.2 136.2,53.6 135.9,49.9 C135.6,46.2 135.8,44.9 136.5,44.1 C137.2,43.3 139.0,43.1 140.0,45.2 C141.0,47.3 142.1,52.8 142.3,56.9 C142.5,61.0 141.2,66.2 141.2,69.7 C141.2,73.2 141.2,76.8 142.3,77.8 C143.5,78.8 145.6,76.9 148.1,75.5 C150.6,74.1 154.9,72.0 157.4,69.7 C159.9,67.4 162.7,64.4 163.3,61.5 C163.9,58.6 162.3,53.9 160.9,52.2 C159.5,50.4 156.4,49.6 155.1,51.0 C153.7,52.4 152.6,57.6 152.8,60.3 C153.0,63.0 154.4,66.7 156.3,67.3 C158.2,67.9 161.9,65.2 164.4,63.8 C166.9,62.5 169.5,60.9 171.4,59.2 C173.3,57.5 174.5,57.1 176.0,53.4 C177.5,49.7 180.1,38.5 180.7,37.1 C181.3,35.7 179.1,43.1 179.5,45.2 C179.9,47.3 181.2,49.7 183.0,49.9 C184.8,50.1 188.1,48.9 190.0,46.4 C191.9,43.9 194.3,38.5 194.7,34.8 C195.1,31.1 192.7,26.1 192.3,24.3"/>
<path d="M56.6,209.9 C57.4,208.7 59.8,204.8 61.5,202.5 C63.2,200.2 65.7,197.0 66.5,195.9"/>
<path d="M64.8,157.2 C65.1,158.1 66.0,160.6 66.5,162.9 C67.0,165.2 67.3,168.7 68.1,171.2 C68.9,173.7 69.9,175.6 71.4,177.8 C72.9,180.0 76.0,182.5 77.2,184.4 C78.4,186.3 79.5,187.8 78.8,189.3 C78.1,190.8 75.7,192.4 73.1,193.4 C70.5,194.4 65.7,194.8 63.2,195.1 C60.7,195.4 58.8,195.5 58.2,195.1 C57.7,194.7 58.5,193.3 59.9,192.6 C61.3,191.9 64.0,191.6 66.5,191.0 C69.0,190.4 72.5,190.0 74.7,189.3 C76.9,188.6 78.3,188.5 79.7,186.8 C81.1,185.2 82.1,182.8 82.9,179.4 C83.7,176.0 84.0,168.5 84.6,166.2 C85.1,163.9 86.1,163.7 86.2,165.4 C86.3,167.0 84.9,173.6 85.4,176.1 C86.0,178.6 88.0,180.0 89.5,180.2 C91.0,180.3 93.2,179.3 94.5,177.0 C95.8,174.7 96.7,169.2 97.0,166.2 C97.3,163.2 96.0,160.2 96.1,158.8 C96.2,157.4 97.7,156.6 97.8,158.0 C97.9,159.4 96.4,165.2 96.9,167.1 C97.5,169.0 99.6,170.3 101.1,169.5 C102.6,168.7 104.2,164.9 106.0,162.0 C107.8,159.1 110.2,154.5 112.0,152.0 C113.8,149.5 115.7,146.3 116.5,147.0 C117.3,147.7 115.9,155.7 117.0,156.0 C118.1,156.3 121.2,152.0 123.0,149.0 C124.8,146.0 126.9,138.0 128.0,138.0 C129.1,138.0 128.5,148.8 129.6,149.2 C130.7,149.6 133.4,143.2 134.8,140.4 C136.3,137.6 137.1,132.0 138.3,132.6 C139.5,133.2 140.6,142.7 141.8,143.9 C143.0,145.1 143.9,142.1 145.3,139.6 C146.8,137.1 148.6,132.7 150.5,129.1 C152.4,125.5 155.9,116.8 156.6,117.8 C157.3,118.8 154.5,132.7 154.9,135.2 C155.4,137.7 157.6,133.9 159.3,132.6 C161.1,131.3 163.2,129.4 165.4,127.4 C167.6,125.4 170.5,123.3 172.4,120.4 C174.3,117.5 176.1,113.2 176.7,109.9 C177.3,106.6 176.5,101.8 175.8,100.3 C175.1,98.9 173.6,99.6 172.4,101.2 C171.3,102.8 169.4,106.6 168.9,109.9 C168.5,113.2 168.8,119.0 169.7,121.2 C170.6,123.4 172.2,123.9 174.1,123.0 C176.0,122.1 178.8,118.5 181.1,116.0 C183.4,113.5 186.6,110.7 188.1,108.2 C189.5,105.7 189.7,104.3 189.8,101.2 C189.9,98.1 188.5,91.7 188.9,89.8 C189.3,87.9 191.2,89.1 192.4,89.8 C193.6,90.5 194.9,92.4 195.9,94.2 C196.9,95.9 197.3,99.0 198.5,100.3 C199.7,101.6 201.3,102.5 202.9,102.1 C204.5,101.7 206.9,99.6 208.1,97.7 C209.3,95.8 209.8,92.4 209.9,90.7 C210.1,88.9 209.2,87.8 209.0,87.2"/>
</g>
</svg>
</body></html>
